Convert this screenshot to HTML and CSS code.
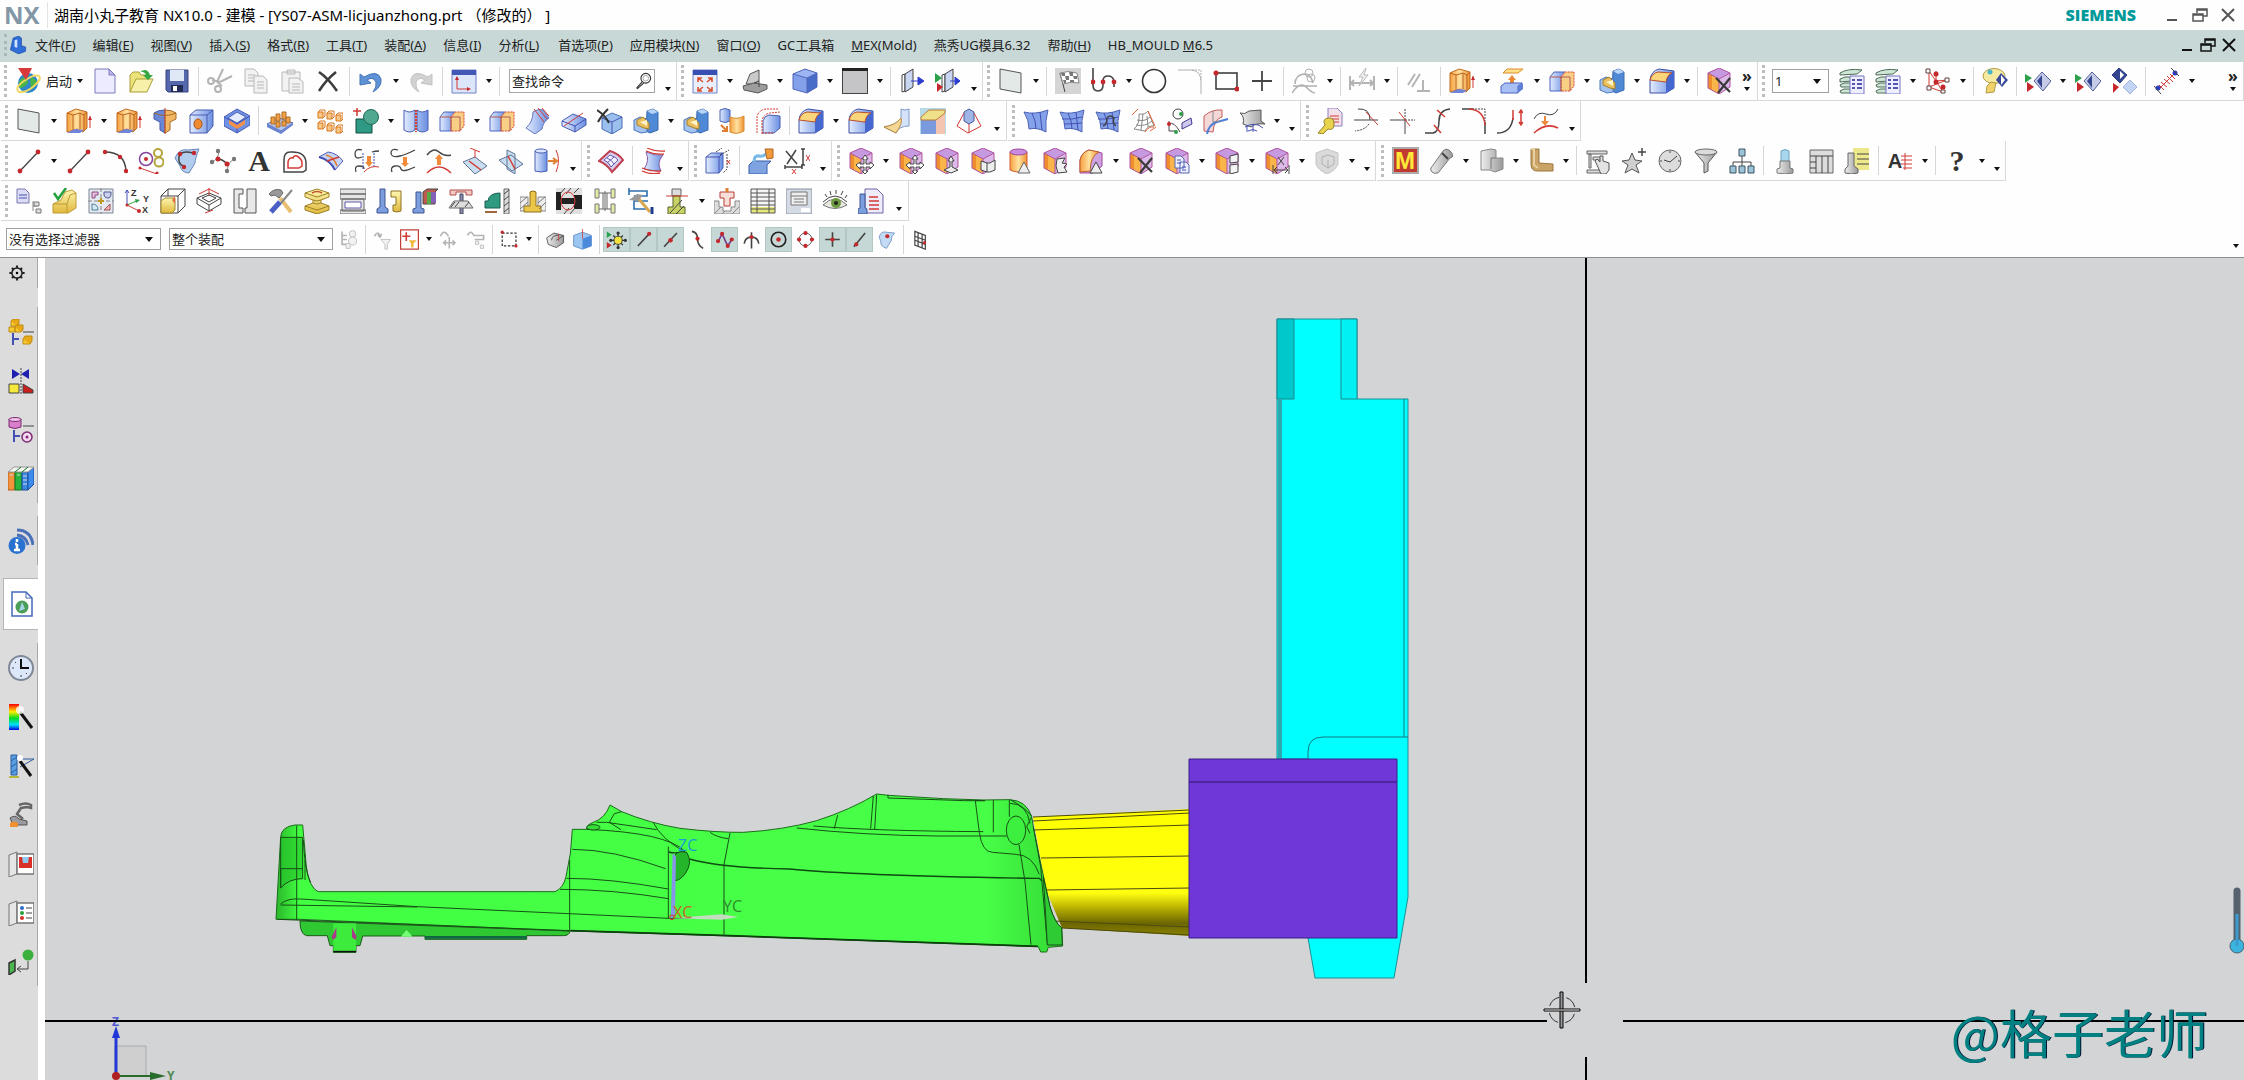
FILE: index.html
```html
<!DOCTYPE html>
<html lang="zh-CN">
<head>
<meta charset="utf-8">
<title>NX10.0 - 建模</title>
<link rel="stylesheet" href="styles.css">
</head>
<body>
<svg class="sprite" aria-hidden="true">
<defs>
<linearGradient id="gb"><stop offset="0" stop-color="#e3ecff"/><stop offset="1" stop-color="#6a8fe0"/></linearGradient>
<linearGradient id="go"><stop offset="0" stop-color="#f6a040"/><stop offset=".5" stop-color="#ffe2a0"/><stop offset="1" stop-color="#ee9030"/></linearGradient>
<linearGradient id="gg"><stop offset="0" stop-color="#eeeeee"/><stop offset="1" stop-color="#999999"/></linearGradient>
<linearGradient id="gy" x2="0" y2="1"><stop offset="0" stop-color="#fdf6b0"/><stop offset="1" stop-color="#e0b83c"/></linearGradient>
<linearGradient id="gr" x2="0" y2="1"><stop offset="0" stop-color="#f00"/><stop offset=".3" stop-color="#fe0"/><stop offset=".55" stop-color="#0d2"/><stop offset=".8" stop-color="#0df"/><stop offset="1" stop-color="#00d"/></linearGradient>
<linearGradient id="yel" x2="0" y2="1"><stop offset="0" stop-color="#ff0"/><stop offset=".66" stop-color="#ffff10"/><stop offset=".78" stop-color="#b8b000"/><stop offset=".9" stop-color="#6c6600"/><stop offset="1" stop-color="#8a8200"/></linearGradient>
<linearGradient id="grn"><stop offset="0" stop-color="#2bb52b"/><stop offset=".03" stop-color="#42ff42"/><stop offset=".9" stop-color="#48ff48"/><stop offset="1" stop-color="#34d834"/></linearGradient>
</defs>
<symbol id="start" viewBox="0 0 26 26"><circle cx="13" cy="15" r="10" fill="#2e86cc"/><path d="M5 12q4-5 7-1t-2 7-4 3q-4-4-1-9M16 9q6 2 6 7l-5 5q-3-5-1-12" fill="#48b44a"/><path d="M4 24Q-1 20 9 13T24 8q3 3-5 10T4 24" fill="none" stroke="#f0d860" stroke-width="2"/><path d="M3 0h14l-6 12z" fill="#d8383a"/></symbol>
<symbol id="new" viewBox="0 0 26 26"><path d="M3 1h14l6 6v18H3z" fill="#ecebff" stroke="#7d7bbd"/><path d="M17 1v6h6z" fill="#b9b6ee" stroke="#7d7bbd"/></symbol>
<symbol id="open" viewBox="0 0 26 26"><path d="M2 24V7l3-3h6l2 3h8v5" fill="#ece27a" stroke="#a99e39"/><path d="M2 24l6-13h17l-6 13z" fill="#f6f0a8" stroke="#a99e39"/><path d="M12 4q7-5 10 3h3l-5 5-5-5h3q-2-4-6-3" fill="#35a843"/></symbol>
<symbol id="save" viewBox="0 0 26 26"><path d="M2 2h22v22H4l-2-2z" fill="#5568ac" stroke="#39457e"/><path d="M6 2h14v11H6z" fill="#dfe9f6"/><path d="M7 17h12v7H7z" fill="#222b55"/><path d="M9 18h4v5H9z" fill="#fff"/></symbol>
<symbol id="cut" viewBox="0 0 26 26"><path d="M10 14L16 1M13 14L25 8M10 14l5 4M5 12l8 2" class="s3"/><circle cx="4" cy="13" r="3" class="s3"/><circle cx="11" cy="21" r="3" class="s3"/></symbol>
<symbol id="copy" viewBox="0 0 26 26"><path d="M2 1h9l4 4v13H2z M5 7h7M5 10h7M5 13h7" class="lg"/><path d="M11 8h9l4 4v13H11z M14 14h7M14 17h7M14 20h7" class="lg"/></symbol>
<symbol id="paste" viewBox="0 0 26 26"><path d="M3 4h18v19H3z M8 2h8v4H8z" class="lg"/><path d="M10 10h9l5 4v11H10z M13 16h8M13 19h8M13 22h8" class="lg"/></symbol>
<symbol id="del" viewBox="0 0 26 26"><path d="M4 4q9 6 18 19M21 4Q11 12 4 23" fill="none" stroke="#3d3d3d" stroke-width="2.6"/></symbol>
<symbol id="undo" viewBox="0 0 26 26"><path d="M2 6v11l11-2-4-3q6-4 9 2 1 5-3 10 9-5 8-13Q20 1 6 9z" fill="#5f93d6" stroke="#4474b8"/></symbol>
<symbol id="redo" viewBox="0 0 26 26"><path d="M24 6v11l-11-2 4-3q-6-4-9 2-1 5 3 10-9-5-8-13Q6 1 20 9z" fill="#d2d2d2" stroke="#c2c2c2"/></symbol>
<symbol id="win" viewBox="0 0 26 26"><path d="M1 2h24v23H1z" fill="#dce6fb" stroke="#6f82c5"/><path d="M1 2h24v5H1z" fill="#4159b5"/><path d="M6 9v12h12" class="r"/><path d="M4 12l2-4 2 4zM16 19l4 2-4 2z" class="rf"/></symbol>
<symbol id="fit" viewBox="0 0 26 26"><path d="M1 2h24v23H1z" fill="#e8eefc" stroke="#6f82c5"/><path d="M1 2h24v5H1z" fill="#3750b2"/><path d="M6 14v-4h4M20 14v-4h-4M6 19v4h4M20 19v4h-4M6 10l5 4M20 10l-5 4M6 23l5-4M20 23l-5-4" fill="none" stroke="#d9502e" stroke-width="1.6"/></symbol>
<symbol id="orient" viewBox="0 0 26 26"><path d="M4 16L8 6l9-4v11l-5 3z" fill="#c9c9c9" stroke="#555"/><path d="M1 18l11-3 13 2v4l-9 4-14-3z" fill="#9d9d9d" stroke="#555"/><path d="M12 15l5-2v6" class="k"/></symbol>
<symbol id="cube" viewBox="0 0 26 26"><path d="M1 6l12-5 12 4-10 5z" fill="#9db6f3"/><path d="M1 6l14 4v15L1 21z" fill="#83a0ea"/><path d="M15 10l10-5v14l-10 6z" fill="#4a6cc9"/><path d="M1 6l12-5 12 4v14l-10 6-14-4zM1 6l14 4 10-5M15 10v15" fill="none" stroke="#5065b8"/></symbol>
<symbol id="bgsq" viewBox="0 0 26 26"><path d="M0 0h26v26H0z" fill="#c5c5c7" stroke="#444" stroke-width="2"/><path d="M0 0h26v3H0z" fill="#222"/></symbol>
<symbol id="clip" viewBox="0 0 26 26"><path d="M3 7l3-1v17l-3 1z" fill="#fff" stroke="#444"/><path d="M6 6l8-5v18l-8 5z" fill="#c9d6f2" stroke="#444"/><path d="M12 13h7V9l6 4-6 4v-4" fill="#2c3cd0" stroke="#2c3cd0"/></symbol>
<symbol id="clip2" viewBox="0 0 26 26"><path d="M7 7l3-1v17l-3 1z" fill="#fff" stroke="#444"/><path d="M10 6l8-5v18l-8 5z" fill="#c9d6f2" stroke="#444"/><path d="M15 13h5V9l5 4-5 4v-4" fill="#2c3cd0" stroke="#2c3cd0"/><path d="M0 5l7 5-7 5z" class="gf"/><path d="M2 15l6 4-6 5z" class="rf"/></symbol>
<symbol id="sheet" viewBox="0 0 26 26"><path d="M2 1l21 4v20L2 21z" fill="#e3e9e6" stroke="#555"/></symbol>
<symbol id="flag" viewBox="0 0 26 26"><path d="M0 0h26v26H0z" fill="#d5d5d5"/><path d="M5 5l5 19" class="k"/><path d="M5 5q8-3 17 0l2 10q-8-2-16 1z" fill="#fff" stroke="#888"/><path d="M6 5h4v3H7zM14 4h4v4h-3zM10 8h4v4h-3zM18 8h4v3h-3zM8 12h3v3H9zM15 12h4v2h-4z" fill="#777"/></symbol>
<symbol id="prof" viewBox="0 0 26 26"><path d="M2 0v17q0 6 5 6t5-6v-4q0-5 5-5t6 5v6" class="k" stroke-width="1.600"/><circle cx="2" cy="14" r="2.4" class="rf"/><circle cx="12" cy="14" r="2.4" class="rf"/><circle cx="23" cy="14" r="2.4" class="rf"/></symbol>
<symbol id="circ" viewBox="0 0 26 26"><circle cx="13" cy="13" r="11.5" fill="none" stroke="#333" stroke-width="1.6"/></symbol>
<symbol id="arc" viewBox="0 0 26 26"><path d="M1 2h14q9 1 9 12v12" class="lg0"/><path d="M15 2h9v10" class="d lg0"/></symbol>
<symbol id="rect" viewBox="0 0 26 26"><path d="M3 5h21v16H3z" fill="none" stroke="#333" stroke-width="1.5"/><circle cx="3" cy="5" r="2.5" class="rf"/><circle cx="24" cy="21" r="2.5" class="rf"/></symbol>
<symbol id="plus" viewBox="0 0 26 26"><path d="M13 3v20M3 13h20" fill="none" stroke="#444" stroke-width="1.8"/></symbol>
<symbol id="gcurve" viewBox="0 0 26 26"><path d="M1 18h24M3 16q0-9 9-10 7 0 9 9M0 25q8-12 14-6t9 6" class="lg0" stroke-width="1.500"/><circle cx="17" cy="5" r="4" class="lg0"/><circle cx="19" cy="10" r="4" class="lg0"/></symbol>
<symbol id="gdim" viewBox="0 0 26 26"><path d="M1 8v14M25 8v14M2 15h22M5 12l-3 3 3 3M21 12l3 3-3 3" class="s3"/><path d="M17 0l-7 9h4l-4 9 9-11h-4z" class="lg"/></symbol>
<symbol id="gperp" viewBox="0 0 26 26"><path d="M2 17L9 6M6 19l8-13M17 12v11M11 23h13" class="s3"/></symbol>
<symbol id="extr" viewBox="0 0 26 26"><path d="M1 5l9-4 11 3v16l-4 4-6-3-10 3z" fill="url(#go)" stroke="#c06a20"/><path d="M1 5l6 2 7-2 4 2 3-3M7 7v15M14 5v16M18 7v16" fill="none" stroke="#b9651f"/><path d="M1 25l8-4 9 1-4 3z" fill="#6f83d8"/><path d="M24 20V8" class="r"/><path d="M22 12l2-4 2 4z" class="rf"/></symbol>
<symbol id="lift" viewBox="0 0 26 26"><path d="M4 5l4-4h16l-5 4z" fill="#ffe08a" stroke="#dd8a2a"/><path d="M13 7l4 5h-2v5h-4v-5H9z" fill="#ea8a35"/><path d="M2 18l4-3h17l-4 3v7H2z" fill="#a9c0f5" stroke="#4b63c0"/><path d="M19 18l5-3v6l-5 4z" fill="#5f7fd8"/></symbol>
<symbol id="bool" viewBox="0 0 26 26"><path d="M1 9l4-5h11v15l-3 4H1z" fill="url(#gb)" stroke="#4b63c0"/><path d="M12 9l4-5h9v14l-4 5h-9z" fill="#f9cf85" stroke="#d8402c" stroke-dasharray="2 1"/><path d="M1 9h11v14M12 9h9v14" fill="none" stroke="#b05858"/></symbol>
<symbol id="shellb" viewBox="0 0 26 26"><path d="M14 3l6-2 5 3v18l-8 3-4-2z" fill="#4f88d4" stroke="#3d68b0"/><path d="M14 3l6-2 5 3-6 2z" fill="#b9d4f4"/><path d="M1 12l6-3 7 2v13l-6 1-7-3z" fill="#a4c3ee" stroke="#4b78bc"/><path d="M4 12l6-3 6 6v6l-5-1-7-3z" fill="#eac05f" stroke="#a6802a"/><path d="M7 14l7 4v-6z" fill="#fff3c8"/></symbol>
<symbol id="blend" viewBox="0 0 26 26"><path d="M1 12Q2 3 10 1l15 2v17l-8 5H1z" fill="url(#gb)" stroke="#3d4ea5"/><path d="M17 14q0-8 8-11v17l-8 5z" fill="#4468cf"/><path d="M1 12Q3 5 9 4l14 1q-5 2-6 9z" fill="#f9d57c" stroke="#bb4f2e"/></symbol>
<symbol id="pcube" viewBox="0 0 26 26"><path d="M13 0l11 5-11 6L2 5z" fill="#c59ae0"/><path d="M2 5l11 6v15L2 20z" fill="#f9b54a"/><path d="M2 5l4 2v15l-4-2z" fill="#ee8e2c"/><path d="M13 11l11-6v14l-11 7z" fill="#dcb9e8"/><path d="M13 0l11 5v14l-11 7-11-6V5zM2 5l11 6 11-6M13 11v15" fill="none" stroke="#b0529e"/></symbol>
<symbol id="pdel" viewBox="0 0 26 26"><use href="#pcube"/><path d="M10 10l14 14M24 10L12 25" fill="none" stroke="#3a3a3a" stroke-width="2.200"/></symbol>
<symbol id="pmove" viewBox="0 0 26 26"><use href="#pcube"/><path d="M17 7l3 4h-2v5h4v-2l4 3-4 4v-2h-4v4h2l-3 3-3-3h2v-4h-4v2l-4-4 4-3v2h4v-5h-2z" fill="#fff" stroke="#444"/></symbol>
<symbol id="ppull" viewBox="0 0 26 26"><use href="#pcube"/><path d="M17 8l3 5h-2v6l6 3-7 3-7-3 6-3v-6h-2z" fill="#eee" stroke="#444"/></symbol>
<symbol id="pcopyf" viewBox="0 0 26 26"><use href="#pcube"/><path d="M11 13l6 2v9l-6-2zM17 15h3l5-3v10l-5 2h-3" fill="#eee" stroke="#444"/></symbol>
<symbol id="pcyl" viewBox="0 0 26 26"><path d="M4 4v18q8 4 17 0V4z" fill="url(#go)" stroke="#d05c30"/><ellipse cx="12.500" cy="4" rx="8.500" ry="3" fill="#c78be0" stroke="#a04a9c"/><path d="M18 14l6 11H12z" fill="#eee" stroke="#666"/></symbol>
<symbol id="pgrp" viewBox="0 0 26 26"><use href="#pcube"/><path d="M15 11l8-1-3 5 5 1-3 3 3 5-9 1-2-7z" fill="#f0f0f0" stroke="#444"/></symbol>
<symbol id="pblend" viewBox="0 0 26 26"><path d="M2 12q2-8 9-10l13 3v13l-9 7H2z" fill="#cda2e2" stroke="#a0469a"/><path d="M2 12q2-8 9-10l10 2q-6 3-8 11l-1 8-10 1z" fill="url(#go)" stroke="#c0602a"/><path d="M18 14l6 11H12z" fill="#eee" stroke="#444"/></symbol>
<symbol id="pcopy" viewBox="0 0 26 26"><use href="#pcube"/><path d="M11 8h6l3 3v9h-9zM16 14h6l3 3v8h-9z" fill="#eef" stroke="#5468b0"/><path d="M13 12h4M13 15h4M18 19h4M18 22h4" class="b"/></symbol>
<symbol id="pstack" viewBox="0 0 26 26"><use href="#pcube"/><path d="M16 8l8-2v8l-8 1zM16 17l8-1v8l-8 2z" fill="#f4f4f4" stroke="#444"/></symbol>
<symbol id="pdim" viewBox="0 0 26 26"><use href="#pcube"/><path d="M9 17v9M25 17v9M10 22h14M13 19l-3 3 3 3M21 19l3 3-3 3M14 9l6 8M20 9l-6 8" class="k"/></symbol>
<symbol id="shield" viewBox="0 0 26 26"><path d="M2 5l11-4 11 4v11q-2 6-11 10Q4 22 2 16z" fill="#dadada" stroke="#c4c4c4"/><path d="M8 9l6-2 6 2v7l-6 4-6-4zM14 12v8" class="lg0"/></symbol>
<symbol id="layer" viewBox="0 0 26 26"><path d="M1 5q8-5 22-3l-5 4-17 1zM1 11l5-2h10l-3 4-12 1zM1 17l4-2h8v4H2zM1 23l4-2h8v4H2z" fill="#cfe5d6" stroke="#4b6b56"/><path d="M11 8h14v18H11z" fill="#eeeeff" stroke="#7374c0"/><path d="M13 12h3M13 16h3M13 20h3M18 12h5M18 16h5M18 20h5" stroke="#5356b0" stroke-width="2"/></symbol>
<symbol id="tree" viewBox="0 0 26 26"><path d="M4 3v16l14 5M4 3l7 10 12-1M4 19L22 12M11 13l7 11M11 3v10" class="r"/><path d="M1 1h4v4H1zM2 18h4v4H2zM20 10h4v4h-4zM16 22h4v3h-4z" fill="#fff" stroke="#5c4038"/><circle cx="11" cy="6" r="2.500" class="rf"/><circle cx="11" cy="14" r="2.500" class="rf"/><circle cx="18" cy="19" r="2.500" class="rf"/></symbol>
<symbol id="pick" viewBox="0 0 26 26"><ellipse cx="12" cy="8" rx="11" ry="7.500" fill="#f6e9a0" stroke="#b39b46"/><path d="M9 14l-4 4-1 7 8-1 2-9z" fill="#efd36a" stroke="#b39b46"/><circle cx="8" cy="4" r="2.500" fill="#49b6c8"/><path d="M14 12l5-7 7 7-6 7z" fill="#39499a"/><path d="M19 7v10l4-5z" fill="#fff"/></symbol>
<symbol id="dmd" viewBox="0 0 26 26"><path d="M9 13L17 4l9 9-8 10z" fill="#c5cbe6" stroke="#53619e"/><path d="M12 13l5-6v13z" fill="#33458f"/><path d="M0 6l7 4-7 5z" class="gf"/><path d="M2 14l7 5-7 5z" class="rf"/></symbol>
<symbol id="dmd2" viewBox="0 0 26 26"><path d="M1 7l7-7 8 7-7 8z" fill="#33458f" stroke="#2b3a80"/><path d="M9 3v8l4-4z" fill="#fff"/><path d="M12 19l7-7 7 7-7 7z" fill="#c4d4f4" stroke="#a0b4e2"/><path d="M2 15l6 4-6 6z" class="rf"/></symbol>
<symbol id="ruler" viewBox="0 0 26 26"><path d="M4 22L22 4M7 14l6 5M10 11l6 5M13 8l6 6M5 17l5 5M16 6l5 5" class="r"/><circle cx="4" cy="20" r="2.500" fill="#2b3dc0"/><circle cx="21" cy="5" r="2.500" fill="#2b3dc0"/><path d="M0 18l7 8M17 0l8 8" class="k"/></symbol>
<symbol id="rev" viewBox="0 0 26 26"><path d="M2 5q4-3 11-3v23l-5-3v-8l-6-3z" fill="#6a87d8" stroke="#445aa8"/><path d="M13 2q7 0 11 3v6l-6 3v8l-5 3z" fill="#f3b763" stroke="#a66a24"/><path d="M2 5q11 5 22 0" fill="none" stroke="#a66a24"/><path d="M13 0v26" class="r d"/></symbol>
<symbol id="hole" viewBox="0 0 26 26"><path d="M2 7l6-5h17v16l-6 7H2z" fill="url(#gb)" stroke="#4a5db2"/><path d="M2 7h17v18M19 7l6-5" fill="none" stroke="#4a5db2"/><ellipse cx="10" cy="16" rx="4" ry="5" fill="#f08a30" stroke="#a55520"/></symbol>
<symbol id="emb" viewBox="0 0 26 26"><path d="M0 9l13-8 13 7v9l-13 8-13-7z" fill="#6f92e4" stroke="#4a5db2"/><path d="M0 9l13 7 13-8M13 16v9" class="b"/><path d="M4 10l9-6 9 5-9 6z" fill="#e4ecff" stroke="#4a5db2"/><path d="M5 12l8 5 8-5v4l-8 5-8-5z" fill="#f3904a"/></symbol>
<symbol id="patt" viewBox="0 0 26 26"><path d="M0 16l12-6 14 5-12 8z" fill="#b5c6f2" stroke="#5a6cb8"/><path d="M0 16v3l14 7 12-9v-2l-12 8z" fill="#6a83d0"/><path d="M4 9h4v7H4zM9 6h4v7H9zM15 4h4v7h-4zM9 14h4v5H9zM15 13h4v5h-4zM19 9h4v6h-4z" fill="#efa047" stroke="#b06d20"/></symbol>
<symbol id="patg" viewBox="0 0 26 26"><path d="M1 4h5v6H1zM10 5h5v6h-5zM19 7h5v6h-5zM1 15h5v6H1zM10 17h5v6h-5zM19 19h5v6h-5z" fill="#f8c785" stroke="#d8741a"/><path d="M1 4l2-2h5v6l-2 2M10 5l2-2h5v6l-2 2M19 7l2-2h5v6l-2 2M1 15l2-2h5v6l-2 2M10 17l2-2h5v6l-2 2M19 19l2-2h5v6l-2 2" fill="none" stroke="#d8741a"/></symbol>
<symbol id="unite" viewBox="0 0 26 26"><path d="M3 11h16v14H3z" fill="#2e9a86" stroke="#134c40"/><circle cx="18" cy="9" r="7.500" fill="#4fa88f" stroke="#1f6a58"/><path d="M4 0v8M0 3h8" class="r" stroke-width="1.500"/></symbol>
<symbol id="sew" viewBox="0 0 26 26"><path d="M1 2q5 4 11 0v20q-5 4-11 0zM14 2q5 4 11 0v20q-5 4-11 0z" fill="url(#gb)" stroke="#4a5db2"/><path d="M13 2v22" class="r d w"/></symbol>
<symbol id="draftf" viewBox="0 0 26 26"><path d="M8 4q6-4 10-2l6 8q-6 4-7 11L10 26l-9-6q7-6 7-16z" fill="url(#gb)" stroke="#6676c0"/><path d="M9 1l10 13M13 0l9 11M17 0l7 8" class="r"/></symbol>
<symbol id="split" viewBox="0 0 26 26"><path d="M1 13l11-7 13 5v6l-11 7-13-6z" fill="url(#gb)" stroke="#4a5db2"/><path d="M1 13l13 5 11-7M14 18v6" class="b"/><path d="M3 18L22 5" class="r"/></symbol>
<symbol id="delb" viewBox="0 0 26 26"><path d="M5 10l10-5 10 4v11l-10 6-10-5z" fill="#9cc0ee" stroke="#4a6db2"/><path d="M5 10l10 4 10-5M15 14v12" class="b"/><path d="M0 2q8 5 12 13M11 1Q4 8 1 14" fill="none" stroke="#333" stroke-width="2"/></symbol>
<symbol id="repl" viewBox="0 0 26 26"><path d="M1 2q5-3 10 0v11q-5 3-10 0z" fill="url(#gb)" stroke="#4a63b2"/><path d="M11 9q7 3 14-1v15q-7 4-14 1z" fill="url(#go)" stroke="#d88a30"/><path d="M2 17l5 5M8 18v5H3" fill="none" stroke="#e07c30" stroke-width="2"/></symbol>
<symbol id="dash" viewBox="0 0 26 26"><path d="M8 13q1-5 6-6l11 1v12l-6 5H8z" fill="url(#gb)" stroke="#4a5db2"/><path d="M2 25V8q3-7 10-7h12M7 26V12q2-6 8-7l10-1M7 25h12" class="r d"/></symbol>
<symbol id="flange" viewBox="0 0 26 26"><path d="M17 1q4 2 8 0v17q-10 0-13 7l-12-6q12-2 17-9z" fill="#d4e2fa" stroke="#7f9ac8"/><path d="M17 10q2 5-5 15L0 19q12-2 17-9" fill="#f5d795" stroke="#b98c3c"/></symbol>
<symbol id="chamf" viewBox="0 0 26 26"><path d="M0 0h26v26H0z" fill="#b7dbe6"/><path d="M1 12h15v14H1z" fill="#7b9ade"/><path d="M16 12l9-8v22h-9z" fill="#f4c4b0"/><path d="M1 9l8-7h16v3l-9 7H1z" fill="#efe08a" stroke="#c07d3a"/></symbol>
<symbol id="draft" viewBox="0 0 26 26"><path d="M8 4l5-3 5 3v9l-5 3-5-3z" fill="#9fb5e6" stroke="#44599c"/><path d="M8 5L1 18l11 7 13-7-7-13M13 16v9" class="r"/></symbol>
<symbol id="surf" viewBox="0 0 26 26"><path d="M1 4q11 3 24-2-3 10-2 22-9-5-17-3Q6 12 1 4z" fill="#84a2ea" stroke="#4d62b4"/><path d="M9 5q4 8 4 16M17 4q1 9 2 18" class="b"/></symbol>
<symbol id="surf2" viewBox="0 0 26 26"><use href="#surf"/><path d="M3 11q10 1 20-2M5 16q9 0 18-1" class="b"/></symbol>
<symbol id="surf3" viewBox="0 0 26 26"><use href="#surf2"/><path d="M8 18q4-1 4-8 3-4 7 0-2 5 2 8" class="k" stroke-width="1.500"/></symbol>
<symbol id="mesh" viewBox="0 0 26 26"><path d="M8 6q6 1 9-3l6 15q-6-1-9 5L3 21q6-5 5-15zM6 12q8 2 13-3M5 17q9 2 16-4M12 6l-2 16M16 8l1 11" fill="#fff" stroke="#888"/><path d="M1 7l6-6M19 23l6-4M14 24q4-6 9-5M17 3l7 15" fill="none" stroke="#e0683c"/></symbol>
<symbol id="circs" viewBox="0 0 26 26"><circle cx="11" cy="6" r="5" class="k"/><path d="M2 13v10M2 16q5-3 11 8M2 23h8" class="k"/><path d="M15 15l9-5 1 6-10 5z" fill="#cdc8f0" stroke="#41388c"/><circle cx="2" cy="16" r="2" class="rf"/><circle cx="9" cy="24" r="2" class="gf"/><circle cx="14" cy="6" r="2" class="gf"/></symbol>
<symbol id="sweep" viewBox="0 0 26 26"><path d="M1 8q8-7 18-6v7q-8 2-9 15l-9-1z" fill="#f4d8d8" stroke="#c85b5b"/><path d="M4 26q2-10 10-12l11-3" fill="none" stroke="#4a7fd8" stroke-width="2"/><path d="M10 3v11l8-1" fill="none" stroke="#888"/></symbol>
<symbol id="gsurf" viewBox="0 0 26 26"><path d="M1 5q5 2 9-2l12-1v11l4 3q-10-1-14 3L4 16Q6 9 1 5z" fill="url(#gg)" stroke="#555"/><path d="M6 19q10-6 18 1M9 23q5-3 9 0M8 17v7M14 16v8" class="b"/></symbol>
<symbol id="keydoc" viewBox="0 0 26 26"><path d="M11 0h9l5 5v13H11z" fill="#f3dfe8" stroke="#8b80c0"/><path d="M13 8h9M13 11h9M13 14h9" class="r"/><path d="M1 25l7-8q-3-6 3-7t6 6-6 5l-5 5z" fill="#e8d44c" stroke="#97832a"/></symbol>
<symbol id="c1" viewBox="0 0 26 26"><path d="M5 1q12-1 12 11M1 12h24" class="k"/><path d="M16 16q-4 6-14 7" class="k d"/><path d="M13 4l12 13" class="r"/></symbol>
<symbol id="c2" viewBox="0 0 26 26"><path d="M1 12h15v14" class="k"/><path d="M16 12V0M16 12h10" class="k d"/><path d="M10 4l11 14" class="r"/></symbol>
<symbol id="c3" viewBox="0 0 26 26"><path d="M0 25h8q6-1 6-12T25 1" class="k" stroke-width="1.500"/><path d="M9 17l7 8M12 2l8 7" class="r" stroke-width="1.500"/></symbol>
<symbol id="c4" viewBox="0 0 26 26"><path d="M1 1h12M24 14v12" class="k" stroke-width="1.500"/><path d="M8 1q15 1 16 16" class="r" stroke-width="1.500"/><path d="M14 1h10v12" class="k d"/></symbol>
<symbol id="c5" viewBox="0 0 26 26"><path d="M0 25q14 0 16-15" class="k" stroke-width="1.500"/><path d="M16 12V2M24 3v13M22 5l2-3 2 3M22 14l2 3 2-3" class="r" stroke-width="1.500"/></symbol>
<symbol id="c6" viewBox="0 0 26 26"><path d="M1 11q4-8 12-5t12-5" class="k"/><path d="M11 8v5H8l4 5 4-5h-3V8z" fill="#ef8a3a"/><path d="M1 25q12-11 24-5" class="r" stroke-width="1.500"/></symbol>
<symbol id="line" viewBox="0 0 26 26"><path d="M4 23L22 4" class="k" stroke-width="1.300"/><circle cx="4" cy="23" r="2.400" class="rf"/><circle cx="22" cy="4" r="2.400" class="rf"/></symbol>
<symbol id="arcp" viewBox="0 0 26 26"><path d="M3 4q20 0 21 19" class="k" stroke-width="1.500"/><circle cx="3" cy="4" r="2.200" class="rf"/><circle cx="18" cy="9" r="2.200" class="rf"/><circle cx="24" cy="23" r="2.200" class="rf"/></symbol>
<symbol id="lnarc" viewBox="0 0 26 26"><circle cx="8" cy="11" r="6.500" fill="none" stroke="#8444a0" stroke-width="1.500"/><circle cx="8" cy="11" r="2" class="rf"/><circle cx="20" cy="5" r="4" fill="none" stroke="#b5a53a" stroke-width="2"/><circle cx="21" cy="14" r="4.500" fill="none" stroke="#b5a53a" stroke-width="2"/><path d="M2 20l17 6" class="r"/><circle cx="2" cy="20" r="1.500" class="rf"/><circle cx="19" cy="25" r="1.500" class="rf"/></symbol>
<symbol id="sheetc" viewBox="0 0 26 26"><path d="M1 10Q5 0 14 2l11-1q-4 10-4 14l-6 10Q8 25 6 18z" fill="#b3cdee" stroke="#6a88bd"/><path d="M19 5Q6 2 5 9t4 9" class="k" stroke-width="1.500"/><circle cx="6" cy="6" r="2.200" class="rf"/><circle cx="20" cy="5" r="2.200" class="rf"/><circle cx="10" cy="19" r="2.200" class="rf"/></symbol>
<symbol id="spline" viewBox="0 0 26 26"><path d="M2 14q6-2 7-11M17 23q1-9 7-12" fill="none" stroke="#888"/><path d="M7 11q6 0 10 5" class="k" stroke-width="1.500"/><circle cx="2" cy="14" r="2.200" fill="#777"/><circle cx="8" cy="3" r="2.200" fill="#777"/><circle cx="8" cy="11" r="2.500" class="rf"/><circle cx="17" cy="16" r="2.500" class="rf"/><circle cx="17" cy="23" r="2.200" fill="#777"/><circle cx="24" cy="11" r="2.200" fill="#777"/></symbol>
<symbol id="offc" viewBox="0 0 26 26"><path d="M2 24V12q0-8 6-8 15-1 16 10v8l-3 2z" class="k" stroke-width="1.500"/><path d="M6 20v-6q1-5 5-4 1-3 4-2 5 3 5 7v3l-3 2z" class="r" stroke-width="1.500"/></symbol>
<symbol id="ppatch" viewBox="0 0 26 26"><path d="M1 9l9-5q9 1 15 9l-8 9Q12 12 1 9z" fill="#c4d2f4" stroke="#5560b8"/><path d="M1 9q11 3 16 13" class="b w"/><path d="M8 7q8 2 11 11" fill="none" stroke="#e08030" stroke-width="1.500"/><path d="M9 13l12-4" class="r" stroke-width="1.500"/></symbol>
<symbol id="proj" viewBox="0 0 26 26"><path d="M8 2q-7-2-7 4t7 3M18 4q3-1 7-1M2 24q-2-6 3-6t5 3" class="k" stroke-width="1.300"/><path d="M9 5v16M20 5v14" class="d b"/><path d="M13 8v6h-2l4 5 4-5h-2V8z" fill="#ef8a3a"/><path d="M10 24q6-7 15-5" class="r"/></symbol>
<symbol id="proj2" viewBox="0 0 26 26"><path d="M8 2q-7-2-7 3t9 3q5-1 15-6M2 24q-2-5 3-6t6 3 14-2" class="k" stroke-width="1.300"/><path d="M13 9v6h-2l4 4 4-4h-2V9z" fill="#ef8a3a"/></symbol>
<symbol id="comb" viewBox="0 0 26 26"><path d="M1 7q6-8 12-3t12 3" class="k" stroke-width="1.500"/><path d="M13 6l-4 5h2v6h4v-6h2z" fill="#ef8a3a"/><path d="M1 25q12-12 24 0" class="r" stroke-width="1.500"/></symbol>
<symbol id="isect" viewBox="0 0 26 26"><path d="M1 14l12-5 12 9-12 8z" fill="#c9ddf0" stroke="#5f7494"/><path d="M8 0l10 4M13 2v8" class="r"/><path d="M7 13l12 9" class="r" stroke-width="1.500"/></symbol>
<symbol id="isect2" viewBox="0 0 26 26"><path d="M1 12l12-5 12 9-11 7zM9 2l8 4v20l-8-5z" fill="#c9ddf0" stroke="#5f7494"/><path d="M10 8l7 13" class="r" stroke-width="1.500"/></symbol>
<symbol id="wrap" viewBox="0 0 26 26"><path d="M1 3v20q6 2 12 0V3z" fill="url(#gb)" stroke="#4a5db2"/><ellipse cx="7" cy="3" rx="6" ry="2" fill="#dce6ff" stroke="#4a5db2"/><path d="M14 13h8M19 10l4 3-4 3" fill="none" stroke="#e08030" stroke-width="2"/><path d="M22 2q5 10 0 22" class="r"/></symbol>
<symbol id="ndia" viewBox="0 0 26 26"><path d="M1 13l11-10q9 3 13 9L14 24Q9 16 1 13z" fill="#d8d0ee" stroke="#c04050" stroke-width="2"/><path d="M6 12l6-5q6 2 8 5l-7 7q-2-5-7-7zM9 10q5 2 7 6M9 15l7-6" fill="#f6f4ff" stroke="#6658b0"/></symbol>
<symbol id="nx" viewBox="0 0 26 26"><path d="M5 4q9 4 17 3-7 8-2 16-8 0-17-2 6-8 2-17z" fill="url(#gb)" stroke="#8a5ca0"/><path d="M6 0q9 4 18 3M5 3q9 4 18 3M1 20q9 4 19 3M1 23q9 4 18 2" class="r" stroke-width="1.300"/></symbol>
<symbol id="mvf" viewBox="0 0 26 26"><path d="M1 9l5-4h12v15l-4 5H1z" fill="url(#gb)" stroke="#4a63b8"/><path d="M14 9v16M1 9h13l4-4" class="b"/><path d="M11 4l6-4M15 7l9-5M22 6v15l-4 4" class="k d"/><path d="M22 12l3 4M25 12l-3 4" class="r"/></symbol>
<symbol id="pour" viewBox="0 0 26 26"><path d="M1 17l4-4h18l-4 4v9H1z" fill="#7fa3e0" stroke="#3d5fae"/><path d="M6 14q0-7 5-6t9-4" fill="none" stroke="#78b8e8" stroke-width="3"/><path d="M17 1h8v9l-6 1z" fill="#f09a3c" stroke="#b06420"/></symbol>
<symbol id="xdim" viewBox="0 0 26 26"><path d="M2 3l11 13M12 2L3 16M19 1v16M17 1h4M17 17h4M1 19h17M1 17v4M18 17v4" class="k" stroke-width="1.500"/><path d="M22 7l4 6M26 7l-4 6M8 21l4 5M12 21l-4 5" class="r"/></symbol>
<symbol id="bolt" viewBox="0 0 26 26"><path d="M15 3q4-4 8 1t-1 6L10 25q-4 1-6-1t-1-4z" fill="url(#gg)" stroke="#777"/><path d="M14 5l6 6" stroke="#444" stroke-width="2"/></symbol>
<symbol id="gblk" viewBox="0 0 26 26"><path d="M3 3l10-2 5 1v8h7v11l-8 3-5-2H3z" fill="url(#gg)" stroke="#888"/><path d="M13 21V10h5" fill="none" stroke="#777"/></symbol>
<symbol id="ell" viewBox="0 0 26 26"><path d="M3 1h8v14l14 1v7H9q-6 0-6-7z" fill="#c9a466" stroke="#9b7740"/><path d="M3 1h3v16l4 3" fill="none" stroke="#e8cfa0" stroke-width="2"/></symbol>
<symbol id="hand" viewBox="0 0 26 26"><path d="M2 3h20v3H2zM4 6h2v14H4zM2 22h16v3H2zM8 9h9v3H8z" class="gk"/><path d="M12 17l-2-4 2-2 3 3V8h3v5l6 2v7l-3 4h-5z" fill="#e2e2e2" stroke="#555"/></symbol>
<symbol id="star" viewBox="0 0 26 26"><path d="M11 5l3 7 7 1-6 4 3 8-7-4-7 4 3-8-6-4 7-1z" fill="#cfcfcf" stroke="#555"/><path d="M21 0v8M17 4h8" class="k" stroke-width="1.500"/></symbol>
<symbol id="clk" viewBox="0 0 26 26"><circle cx="13" cy="13" r="11" class="gk"/><path d="M7 12l6 2 7-6M13 3v2M13 21v2M3 13h2M21 13h2" class="k"/></symbol>
<symbol id="funnel" viewBox="0 0 26 26"><path d="M2 4l9 11v10l4-2v-8l9-11z" fill="url(#gg)" stroke="#555"/><ellipse cx="13" cy="4" rx="11" ry="3" class="gk"/></symbol>
<symbol id="org" viewBox="0 0 26 26"><path d="M13 8v6M4 18v-4h18v4M13 14v4" class="k"/><path d="M10 1h6v7h-6zM1 18h6v7H1zM10 18h6v7h-6zM19 18h6v7h-6z" fill="#9cc4d8" stroke="#3d5563"/></symbol>
<symbol id="bluebolt" viewBox="0 0 26 26"><path d="M9 3q4-3 8 0v12H9z" fill="#a8d6ec" stroke="#6aa0bc"/><path d="M8 13h10v7l3 1v4q-8 2-16 0v-4l3-1z" fill="url(#gg)" stroke="#777"/></symbol>
<symbol id="tbl" viewBox="0 0 26 26"><path d="M2 2h23v23H2z" class="gk"/><path d="M2 8h23M8 8v17M14 8v17M20 8v17M2 14h6M2 20h6" class="k"/></symbol>
<symbol id="bnote" viewBox="0 0 26 26"><path d="M9 0h16v22H9z" fill="#eee88c"/><path d="M13 6h12M13 11h12M13 16h12" class="k"/><path d="M4 5h6v13l4 3v4q-6 2-13 0v-4l3-3z" fill="url(#gg)" stroke="#666"/></symbol>
<symbol id="doctree" viewBox="0 0 26 26"><path d="M1 1h8l4 4v10H1z" fill="#dcdcf4" stroke="#7a78b0"/><path d="M3 7h8M3 10h8" class="b"/><path d="M17 13v10M17 18h4" fill="none" stroke="#888"/><path d="M18 14h5v4h-5zM20 21h5v4h-5z" fill="#ddd" stroke="#777"/></symbol>
<symbol id="chk" viewBox="0 0 26 26"><path d="M1 16l8-4 4-8 7-2 4 3v15l-8 5H1z" fill="url(#gy)" stroke="#c09a34"/><path d="M1 16h14l3-9 6-2M15 16v9" fill="none" stroke="#c09a34"/><path d="M2 5l4 6L14 0" fill="none" stroke="#24a03c" stroke-width="2.500"/></symbol>
<symbol id="quad" viewBox="0 0 26 26"><path d="M1 1h24v24H1z" fill="#e4e9ef" stroke="#7c8494"/><path d="M13 0v26M0 13h26" stroke="#888" stroke-dasharray="4 2"/><path d="M4 4h6v3H7v3H4z" fill="#e6c0dc" stroke="#8a4d80"/><path d="M16 4h7v3q-1 4-4 3-3-1-3-3z" fill="#c8d0f0" stroke="#505a90"/><path d="M4 16q6 0 6 6H4z" fill="#d0e8f0" stroke="#50809a"/><path d="M16 22l6-6v6z" fill="#f0b6b6" stroke="#a05050"/><path d="M10 13h6M13 10v6" stroke="#c09a20" stroke-width="2"/></symbol>
<symbol id="cav" viewBox="0 0 26 26"><path d="M1 8l7-7h17v17l-7 7H1zM1 8h17v17M18 8l7-7M8 1v7" class="k"/><path d="M1 13l4-3h10v12l-3 3H1z" fill="url(#gy)" stroke="#a68b2c"/><path d="M12 12l3-4v8z" fill="#e0703c"/></symbol>
<symbol id="wire" viewBox="0 0 26 26"><path d="M1 10l12-5 12 5-12 7zM1 10v6l12 7 12-7v-6M13 17v6" class="k"/><path d="M13 0v8M3 6l10-5 10 5M9 25l8-3" class="r"/><path d="M6 10l7-3 7 3-7 4z" class="k"/></symbol>
<symbol id="brack" viewBox="0 0 26 26"><path d="M2 1h9v5H7v14h4v5H2zM15 1h9v24H13v-5h2z" fill="#e8e8e8" stroke="#555"/></symbol>
<symbol id="tools" viewBox="0 0 26 26"><path d="M12 10l11 14" stroke="#e6c070" stroke-width="4"/><path d="M1 6q5-6 12-4l2 3-4 5-4-3-4 1z" fill="#999" stroke="#666"/><path d="M24 2l-11 13" stroke="#888" stroke-width="2"/><path d="M12 14L3 24" stroke="#4a5fc4" stroke-width="5"/></symbol>
<symbol id="mold" viewBox="0 0 26 26"><path d="M1 5l12-4 12 4v4l-8 3v3l8 3v4l-12 4-12-4v-4l8-3v-3L1 9z" fill="url(#gy)" stroke="#9e8228"/><path d="M1 5l12 4 12-4M1 18l12 4 12-4M9 15q4 2 8 0M9 12q4 2 8 0" fill="none" stroke="#9e8228"/><path d="M8 5q5-3 10 0" fill="none" stroke="#c8502c" stroke-width="1.500"/></symbol>
<symbol id="base" viewBox="0 0 26 26"><path d="M0 1h26v5H0zM0 6h26v5H0zM2 11h22v12H2zM0 22h26v4H0z" fill="#e4e4e4" stroke="#666"/><path d="M5 14h16v6H5z" fill="#fff" stroke="#6058b0"/></symbol>
<symbol id="pin" viewBox="0 0 26 26"><path d="M4 1h5v18l3 2v4H1v-4l3-2z" fill="#7d9ede" stroke="#3d5590"/><path d="M15 3h10v20q-5 2-8 0v-6h3V9h-5z" fill="url(#gy)" stroke="#8d7224"/></symbol>
<symbol id="pinc" viewBox="0 0 26 26"><path d="M4 4h5v16l3 1v4H1v-4l3-1z" fill="#7d9ede" stroke="#3d5590"/><path d="M11 4l4-3h11l-3 3v12H11z" fill="#c05a50" stroke="#444"/><path d="M15 4h4v12h-4z" fill="#58a848"/><path d="M19 4h5v11h-5z" fill="#8460b8"/></symbol>
<symbol id="eject" viewBox="0 0 26 26"><path d="M2 2h22v5h-6V4H8v3H2z" fill="#f3c9c4" stroke="#b0504c"/><path d="M12 6h3v20h-3z" fill="#8a8cb8" stroke="#445"/><path d="M1 20l5-7h14l5 7z" class="gk"/><path d="M3 19l4-5M7 19l4-5M17 19l4-5" class="k"/></symbol>
<symbol id="slide" viewBox="0 0 26 26"><path d="M1 20v-7h3q1-8 12-8v15z" fill="#2e9a80" stroke="#1c5c50"/><path d="M20 1h5v25h-5z" class="gk"/><path d="M20 6l5-4M20 12l5-4M20 18l5-4M20 24l5-4" class="k"/><path d="M1 24h12" stroke="#a0683a" stroke-width="2"/></symbol>
<symbol id="lifter" viewBox="0 0 26 26"><path d="M0 9h8v14H0zM18 9h8v14h-8z" fill="#eee" stroke="#888"/><path d="M10 4q3-2 6 0v14h5v6H4v-6h6z" fill="#ecc648" stroke="#8c7020"/><path d="M0 15l7-6M0 21l8-7M18 15l7-6M19 21l7-7" fill="none" stroke="#777"/></symbol>
<symbol id="runner" viewBox="0 0 26 26"><path d="M0 0h26v26H0z" fill="#e0e0e0"/><path d="M0 4h5v18H0zM18 7h8v14h-8zM5 10h14v6H5z" fill="#222"/><path d="M4 6L9 0M10 6l5-6M18 5l5-5M8 26l5-6M14 26l5-6" class="k"/><ellipse cx="12" cy="13" rx="7" ry="9" class="r"/></symbol>
<symbol id="frame" viewBox="0 0 26 26"><path d="M7 5h12M7 21h12M11 5v16M15 5v16M13 3v20" fill="none" stroke="#666"/><path d="M3 1h4v9H3zM19 1h4v9h-4zM3 16h4v9H3zM19 16h4v9h-4z" fill="#e6eaa8" stroke="#777"/></symbol>
<symbol id="hammer" viewBox="0 0 26 26"><path d="M1 0v7M1 3h18v5H6M20 13H6v8h12" fill="none" stroke="#2c70b0" stroke-width="1.600"/><path d="M10 10l12 14" stroke="#d8a850" stroke-width="3"/><path d="M1 12l8-6 6 1-5 6z" fill="#999"/><path d="M24 19v7" stroke="#1c3c90" stroke-width="3"/></symbol>
<symbol id="insert" viewBox="0 0 26 26"><path d="M8 1h9v7H8z" class="gk"/><path d="M9 8h7v11h5v7H4v-7h5z" fill="#c7d465" stroke="#56602a"/><path d="M2 8h22" class="r"/><path d="M6 25l12-13M12 26l8-8" class="k"/></symbol>
<symbol id="press" viewBox="0 0 26 26"><path d="M0 13h5v6h4v4h8v-4h4v-6h5v13H0z" fill="#ddd" stroke="#888"/><path d="M6 4h14v6h-4v8h-6v-8H6z" fill="#f8e0d8" stroke="#b83c34"/><path d="M13 0v4" stroke="#e08030" stroke-width="3"/><path d="M1 25l6-6M8 26l3-3M18 26l7-7" fill="none" stroke="#888"/></symbol>
<symbol id="grid" viewBox="0 0 26 26"><path d="M1 1h24v24H1z" fill="#f5f5f5"/><path d="M1 19h24v6H1z" fill="#e6e87a"/><path d="M1 1h24v24H1zM1 5h24M1 9h24M1 13h24M1 17h24M1 21h24M7 1v24M19 1v24" fill="none" stroke="#555"/></symbol>
<symbol id="draw" viewBox="0 0 26 26"><path d="M0 1h26v25H0z" fill="#d5dbe4" stroke="#8890a0"/><path d="M5 4h16v13H5zM5 8h16M8 11h10M8 14h10" fill="#eee" stroke="#777"/><path d="M15 20h9v4h-9z" fill="#fff"/></symbol>
<symbol id="eye" viewBox="0 0 26 26"><path d="M1 17Q13 5 25 17q-12 7-24 0z" fill="#e8eadf" stroke="#777"/><circle cx="14" cy="15" r="5" fill="#6c9a3c"/><circle cx="14" cy="15" r="2" fill="#222"/><path d="M1 14Q13 2 25 14M5 9L3 6M9 7L8 3M14 6V2M19 7l2-4M23 10l2-3" class="k"/></symbol>
<symbol id="bom" viewBox="0 0 26 26"><path d="M7 1h12l6 6v18H7z" fill="#eeecfa" stroke="#6a64a8"/><path d="M11 9h9M11 13h10M11 17h10M11 21h10" class="r" stroke-width="1.500"/><path d="M2 6h5v14l2 1v5H0v-5l2-1z" fill="#7d9ede" stroke="#3d5590"/></symbol>
<symbol id="gtree" viewBox="0 0 26 26"><path d="M5 3v16h5M5 8h6M5 13h6" class="s3"/><circle cx="18" cy="6" r="4" class="lg"/><circle cx="18" cy="15" r="5" class="lg"/><path d="M10 18h5v6h-5z" class="lg"/></symbol>
<symbol id="gfil" viewBox="0 0 26 26"><path d="M3 9q4-8 7 0M7 7l3 3 2-4" class="s3"/><path d="M11 13h12l-4 6v6h-3v-6z" class="lg"/></symbol>
<symbol id="rfil" viewBox="0 0 26 26"><path d="M2 1h22v24H2z" fill="#fff" stroke="#c04038" stroke-width="1.500"/><path d="M9 4v11M4 9h10" class="r w"/><path d="M12 14h10l-4 4v5h-3v-5z" fill="#f0b83c"/></symbol>
<symbol id="gmov" viewBox="0 0 26 26"><path d="M3 9q4-10 10 0M14 10v14M8 17h12M10 14l-3 3 3 3M18 14l3 3-3 3" class="s3"/></symbol>
<symbol id="gsel" viewBox="0 0 26 26"><path d="M3 8q4-8 8 0h12v5H12" class="s3"/><path d="M13 15h4v4h-4zM19 20h4v4h-4z" class="lg"/></symbol>
<symbol id="box" viewBox="0 0 26 26"><path d="M4 5h17v16H4z" fill="none" stroke="#333" stroke-width="1.500" stroke-dasharray="3 2"/><circle cx="4" cy="4" r="2" class="rf"/><circle cx="21" cy="21" r="2" class="rf"/></symbol>
<symbol id="cyl" viewBox="0 0 26 26"><path d="M2 11l9-6 12 3v9l-9 6-10-4z" fill="url(#gg)" stroke="#444"/><path d="M8 14q1-7 9-6M14 14l9-6" class="k"/><path d="M17 6v9" class="r"/></symbol>
<symbol id="bbox" viewBox="0 0 26 26"><path d="M2 8l11-4 11 4v13l-11 4-11-4z" fill="#9cc6f2" stroke="#5b88c4"/><path d="M13 12l11-4v13l-11 4z" fill="#4b8ada"/><path d="M13 0v12" class="r"/></symbol>
<symbol id="snap" viewBox="0 0 26 26"><path d="M1 3l6 4-6 4z" class="gf"/><path d="M1 16l6 4-6 4z" class="rf"/><path d="M15 5v18M6 14h18M9 8l12 12M21 8L9 20" stroke="#333" stroke-width="1.500"/><circle cx="15" cy="14" r="5" fill="#f2e23c" stroke="#333"/><circle cx="15" cy="5" r="2" fill="#333"/><circle cx="15" cy="23" r="2" fill="#333"/><circle cx="24" cy="14" r="2" fill="#333"/><circle cx="6" cy="14" r="2" fill="#333"/></symbol>
<symbol id="s1" viewBox="0 0 26 26"><path d="M6 21L20 6" class="k w"/><circle cx="20" cy="6" r="2.600" class="rf"/></symbol>
<symbol id="s2" viewBox="0 0 26 26"><path d="M5 22L21 5" class="k w"/><circle cx="13" cy="14" r="2.800" class="rf"/></symbol>
<symbol id="sc3" viewBox="0 0 26 26"><path d="M6 3q7 1 7 9t7 12" class="k w"/><circle cx="13" cy="12" r="2.600" class="rf"/></symbol>
<symbol id="s4" viewBox="0 0 26 26"><path d="M5 16l5-10 7 15 5-8" fill="none" stroke="#703a90" stroke-width="2"/><circle cx="5" cy="15" r="2.600" class="rf"/><circle cx="10" cy="6" r="2.600" class="rf"/><circle cx="17" cy="21" r="2.600" class="rf"/><circle cx="22" cy="13" r="2.600" class="rf"/></symbol>
<symbol id="s5" viewBox="0 0 26 26"><path d="M13 4v20M4 18q1-8 9-8t9 8" class="k w"/><circle cx="13" cy="10" r="2.500" class="rf"/></symbol>
<symbol id="s6" viewBox="0 0 26 26"><circle cx="13" cy="13" r="9" fill="none" stroke="#222" stroke-width="2"/><circle cx="13" cy="13" r="2.800" class="rf"/></symbol>
<symbol id="s7" viewBox="0 0 26 26"><circle cx="13" cy="13" r="8" class="k"/><circle cx="13" cy="5" r="2.600" class="rf"/><circle cx="13" cy="21" r="2.600" class="rf"/><circle cx="5" cy="13" r="2.600" class="rf"/><circle cx="21" cy="13" r="2.600" class="rf"/></symbol>
<symbol id="s8" viewBox="0 0 26 26"><path d="M13 4v18M4 13h18" class="k w"/><circle cx="13" cy="13" r="2.600" class="rf"/></symbol>
<symbol id="s9" viewBox="0 0 26 26"><path d="M6 22L20 5" class="k w"/><circle cx="9" cy="19" r="2.600" class="rf"/></symbol>
<symbol id="s10" viewBox="0 0 26 26"><path d="M4 10q2-8 9-6l10 1q-5 5-4 9l-6 10Q5 21 6 16z" fill="#c2daf4" stroke="#6a8cc0"/><circle cx="14" cy="9" r="2.600" class="rf"/></symbol>
<symbol id="s11" viewBox="0 0 26 26"><path d="M6 3l13 5v17L6 20zM10 5v17M15 7v16M6 9l13 5M6 14l13 5" class="k" stroke-width="1.500"/><circle cx="18" cy="17" r="2" class="rf"/></symbol>
<symbol id="gear" viewBox="0 0 26 26"><circle cx="13" cy="13" r="6" fill="none" stroke="#222" stroke-width="1.800"/><circle cx="13" cy="13" r="1.500"/><path d="M13 4v3M13 19v3M4 13h3M19 13h3M7 7l2 2M17 17l2 2M19 7l-2 2M9 17l-2 2" stroke="#222" stroke-width="2.500"/></symbol>
<symbol id="asm" viewBox="0 0 26 26"><path d="M1 8h6v5H1zM7 8h6v5H7zM3 2h6v5H3zM15 20h7v5h-7z" fill="#f8cc30" stroke="#c08a10"/><path d="M3 2l2-2h6v5l-2 2M7 8l2-2h6v5l-2 2M15 20l2-3h7v5l-2 3" fill="#e8a818" stroke="#c08a10"/><path d="M5 14v12M5 20h6" class="b w"/><path d="M15 13h11" class="k"/></symbol>
<symbol id="cons" viewBox="0 0 26 26"><path d="M4 1l8 5-8 5zM21 1l-8 5 8 5z" fill="#2020b0"/><path d="M13 0v26" class="k d"/><path d="M1 16h10v9H1z" fill="#f6e83c" stroke="#444"/><path d="M15 16l10 6v3H15z" fill="#c81e1e" stroke="#444"/></symbol>
<symbol id="partn" viewBox="0 0 26 26"><path d="M1 2v8q6 3 12 0V2z" fill="#d880cc" stroke="#7c2c72"/><ellipse cx="7" cy="2.500" rx="6" ry="2" fill="#f0c0e8" stroke="#7c2c72"/><path d="M6 13v12M6 19h6" class="b w"/><path d="M15 9h11" class="k"/><circle cx="19" cy="20" r="5" fill="#f6d8f0" stroke="#7c2c72" stroke-width="1.500"/><circle cx="19" cy="20" r="1.500" fill="#7c2c72"/></symbol>
<symbol id="books" viewBox="0 0 26 26"><path d="M0 6h7v18H0z" fill="#f2923a" stroke="#b8601c"/><path d="M7 6h7v18H7z" fill="#28b43c" stroke="#0c7424"/><path d="M14 6h6v18h-6z" fill="#3c88e0" stroke="#1c4c98"/><path d="M20 6l6-5v17l-6 6z" fill="#3c8cf0" stroke="#1c4c98"/><path d="M0 6l6-5h20l-6 5z" fill="#f4f4f0" stroke="#999"/><path d="M7 6l6-5M14 6l6-5" stroke="#0c7424"/><path d="M15 10h4M15 14h4M2 9h3M9 9h3M15 18h4" stroke="#ccd8e8"/></symbol>
<symbol id="info" viewBox="0 0 26 26"><circle cx="9" cy="17.500" r="8.500" fill="#2a72d0"/><path d="M9 2q14 0 16 15M9 7q9 1 11 10" fill="none" stroke="#4a70b8" stroke-width="3"/><path d="M9 11v3M9 16v6M6 22h6M7 16h2" stroke="#fff" stroke-width="2.500"/></symbol>
<symbol id="page" viewBox="0 0 26 26"><path d="M3 1h14l6 6v18H3z" fill="#fff" stroke="#4468b8" stroke-width="1.500"/><path d="M17 1v6h6" fill="none" stroke="#4468b8"/><circle cx="13" cy="16" r="6.500" fill="#4b9e58"/><path d="M10 20l3-9 3 7z" fill="#a8d4e8"/></symbol>
<symbol id="clock" viewBox="0 0 26 26"><circle cx="13" cy="13" r="12" fill="#dce8fa" stroke="#808898" stroke-width="2"/><path d="M13 4v9h8" fill="none" stroke="#111" stroke-width="2"/><path d="M4 13h2M13 20v2M7 7l1 1M19 19l-1-1" stroke="#445"/></symbol>
<symbol id="wand" viewBox="0 0 26 26"><path d="M1 0h10v26H1z" fill="url(#gr)"/><path d="M12 8l12 16" stroke="#111" stroke-width="3"/><circle cx="12" cy="6" r="4" fill="#fff" opacity=".8"/></symbol>
<symbol id="wand2" viewBox="0 0 26 26"><path d="M3 2h6v20H3z" fill="#5aa0e0" stroke="#2a5ca0"/><path d="M3 8l6-4M3 14l6-4M3 20l6-4M11 6h15l-14 8" stroke="#2a5ca0" fill="none"/><path d="M1 24h10" stroke="#b8b83c" stroke-width="2"/><path d="M12 8l11 15" stroke="#111" stroke-width="3"/><circle cx="12" cy="5" r="3" fill="#fff"/></symbol>
<symbol id="robot" viewBox="0 0 26 26"><path d="M11 3q7-3 12 0v3l-4-1-6 1-4 6 6 5" fill="none" stroke="#666" stroke-width="2.500"/><path d="M2 16q5-4 9 1l8 2v4H5z" fill="#9a9aa2" stroke="#555"/><path d="M2 21q4-3 8 0v4H2z" fill="#f09030"/></symbol>
<symbol id="role" viewBox="0 0 26 26"><path d="M1 4l8-3v22l-8 3z" fill="#e6e6e6" stroke="#777"/><path d="M9 3h17v20H9z" fill="#fff" stroke="#777" stroke-width="1.500"/><path d="M11 6h13v11H11z" fill="#d83028"/><path d="M14 6h7l-1 6h-5z" fill="#8cc8f0"/></symbol>
<symbol id="role2" viewBox="0 0 26 26"><path d="M1 4l8-3v22l-8 3z" fill="#e6e6e6" stroke="#777"/><path d="M9 3h17v20H9z" fill="#fff" stroke="#777" stroke-width="1.500"/><circle cx="14" cy="8" r="2" fill="#2a6cc8"/><circle cx="14" cy="13" r="2" fill="#28a03c"/><circle cx="14" cy="18" r="2" fill="#d83028"/><path d="M18 8h6M18 13h6M18 18h6" class="k"/></symbol>
<symbol id="link" viewBox="0 0 26 26"><path d="M1 14l6-3v11l-6 4z" fill="#48b84c" stroke="#333" stroke-width="1.500"/><circle cx="20" cy="6" r="5.500" fill="#3cb03c"/><path d="M20 12v8H10M13 17l-4 3 4 3" class="k"/></symbol>
<symbol id="part" viewBox="0 0 26 26"><path d="M6 3l8-3 4 3v11l6 2v6l-10 4L2 20z" fill="#2e6ed6" stroke="#1b4aa6"/><path d="M8 6l4-1v12l-4-1z" fill="#cfe2ff"/></symbol>
<symbol id="mag" viewBox="0 0 26 26"><circle cx="17" cy="9" r="7" fill="none" stroke="#333" stroke-width="1.600"/><circle cx="17" cy="9" r="4" fill="none" stroke="#888"/><path d="M12 14l-8 9 1 1 9-8" fill="#ccc" stroke="#333" stroke-width="1.500"/></symbol>
<symbol id="w-min" viewBox="0 0 16 16"><path d="M3 13h10" stroke="currentColor" stroke-width="2"/></symbol>
<symbol id="w-max" viewBox="0 0 16 16"><path d="M5 6V2h10v7h-4M5 3h10M1 7h10v7H1zM1 8h10" fill="none" stroke="currentColor" stroke-width="1.500"/></symbol>
<symbol id="w-close" viewBox="0 0 16 16"><path d="M2 2l12 12M14 2L2 14" stroke="currentColor" stroke-width="2"/></symbol>
</svg>

<header class="titlebar">
<span class="nx">NX</span>
<h1 class="title">湖南小丸子教育 NX10.0 - 建模 - [YS07-ASM-licjuanzhong.prt （修改的） ]</h1>
<span class="brand">SIEMENS</span>
<div class="winctl">
<button aria-label="最小化"><svg><use href="#w-min"/></svg></button><button aria-label="还原"><svg><use href="#w-max"/></svg></button><button aria-label="关闭"><svg><use href="#w-close"/></svg></button>
</div>
</header>

<nav class="menubar">
<i class="grip"></i>
<svg class="particon"><use href="#part"/></svg>
<button>文件(<u>F</u>)</button><button>编辑(<u>E</u>)</button><button>视图(<u>V</u>)</button><button>插入(<u>S</u>)</button><button>格式(<u>R</u>)</button><button>工具(<u>T</u>)</button><button>装配(<u>A</u>)</button><button>信息(<u>I</u>)</button><button class="wide">分析(<u>L</u>)</button><button>首选项(<u>P</u>)</button><button>应用模块(<u>N</u>)</button><button>窗口(<u>O</u>)</button><button>GC工具箱</button><button><u>M</u>EX(Mold)</button><button>燕秀UG模具6.32</button><button>帮助(<u>H</u>)</button><button>HB_MOULD <u>M</u>6.5</button>
<div class="winctl dark">
<button aria-label="最小化文档"><svg><use href="#w-min"/></svg></button><button aria-label="还原文档"><svg><use href="#w-max"/></svg></button><button aria-label="关闭文档"><svg><use href="#w-close"/></svg></button>
</div>
</nav>

<div class="row first">
<div class="bar"><i class="grip"></i>
<button class="tool" aria-label="启动"><svg><use href="#start"/></svg></button><span class="label">启动</span><button class="drop" aria-label="启动选项"></button>
<button class="tool" aria-label="新建"><svg><use href="#new"/></svg></button>
<button class="tool" aria-label="打开"><svg><use href="#open"/></svg></button>
<button class="tool" aria-label="保存"><svg><use href="#save"/></svg></button><i class="sep"></i>
<button class="tool" aria-label="剪切"><svg><use href="#cut"/></svg></button>
<button class="tool" aria-label="复制"><svg><use href="#copy"/></svg></button>
<button class="tool" aria-label="粘贴"><svg><use href="#paste"/></svg></button>
<button class="tool" aria-label="删除"><svg><use href="#del"/></svg></button><i class="sep"></i>
<button class="tool" aria-label="撤消"><svg><use href="#undo"/></svg></button><button class="drop" aria-label="撤消列表"></button>
<button class="tool" aria-label="重做"><svg><use href="#redo"/></svg></button><i class="sep"></i>
<button class="tool" aria-label="窗口"><svg><use href="#win"/></svg></button><button class="drop" aria-label="窗口列表"></button><i class="sep"></i>
<div class="search"><input type="text" aria-label="查找命令" value="查找命令"><svg><use href="#mag"/></svg></div>
<button class="more" aria-label="工具栏选项"></button></div>
<div class="bar"><i class="grip"></i>
<button class="tool" aria-label="适合窗口"><svg><use href="#fit"/></svg></button><button class="drop" aria-label="缩放选项"></button>
<button class="tool" aria-label="定向视图"><svg><use href="#orient"/></svg></button><button class="drop" aria-label="定向选项"></button>
<button class="tool" aria-label="着色"><svg><use href="#cube"/></svg></button><button class="drop" aria-label="渲染样式"></button>
<button class="tool" aria-label="背景"><svg><use href="#bgsq"/></svg></button><button class="drop" aria-label="背景选项"></button><i class="sep"></i>
<button class="tool" aria-label="剪切截面"><svg><use href="#clip"/></svg></button>
<button class="tool" aria-label="编辑截面"><svg><use href="#clip2"/></svg></button><button class="more" aria-label="工具栏选项"></button></div>
<div class="bar"><i class="grip"></i>
<button class="tool" aria-label="草图"><svg><use href="#sheet"/></svg></button><button class="drop" aria-label="草图选项"></button><i class="sep"></i>
<button class="tool" aria-label="完成草图"><svg><use href="#flag"/></svg></button>
<button class="tool" aria-label="轮廓"><svg><use href="#prof"/></svg></button><button class="drop" aria-label="轮廓选项"></button>
<button class="tool" aria-label="圆"><svg><use href="#circ"/></svg></button>
<button class="tool" aria-label="圆角"><svg><use href="#arc"/></svg></button>
<button class="tool" aria-label="矩形"><svg><use href="#rect"/></svg></button>
<button class="tool" aria-label="点"><svg><use href="#plus"/></svg></button><i class="sep"></i>
<button class="tool" aria-label="曲线"><svg><use href="#gcurve"/></svg></button><button class="drop" aria-label="曲线选项"></button><i class="sep"></i>
<button class="tool" aria-label="快速尺寸"><svg><use href="#gdim"/></svg></button><button class="drop" aria-label="尺寸选项"></button><i class="sep"></i>
<button class="tool" aria-label="几何约束"><svg><use href="#gperp"/></svg></button><i class="sep"></i>
<button class="tool" aria-label="拉伸"><svg><use href="#extr"/></svg></button><button class="drop" aria-label="拉伸选项"></button>
<button class="tool" aria-label="偏置区域"><svg><use href="#lift"/></svg></button><button class="drop" aria-label="偏置选项"></button>
<button class="tool" aria-label="合并"><svg><use href="#bool"/></svg></button><button class="drop" aria-label="合并选项"></button>
<button class="tool" aria-label="抽壳"><svg><use href="#shellb"/></svg></button><button class="drop" aria-label="抽壳选项"></button>
<button class="tool" aria-label="边倒圆"><svg><use href="#blend"/></svg></button><button class="drop" aria-label="倒圆选项"></button><i class="sep"></i>
<button class="tool" aria-label="删除面"><svg><use href="#pdel"/></svg></button><button class="more wide" aria-label="更多">»</button></div>
<div class="bar grow"><i class="grip"></i>
<label class="combo layerbox"><select aria-label="工作图层"><option>1</option></select></label>
<button class="tool" aria-label="图层设置"><svg><use href="#layer"/></svg></button>
<button class="tool" aria-label="图层视图"><svg><use href="#layer"/></svg></button><button class="drop" aria-label="图层选项"></button>
<button class="tool" aria-label="WCS"><svg><use href="#tree"/></svg></button><button class="drop" aria-label="WCS选项"></button><i class="sep"></i>
<button class="tool" aria-label="选择"><svg><use href="#pick"/></svg></button><i class="sep"></i>
<button class="tool" aria-label="显示"><svg><use href="#dmd"/></svg></button><button class="drop" aria-label="显示选项"></button>
<button class="tool" aria-label="隐藏"><svg><use href="#dmd"/></svg></button>
<button class="tool" aria-label="反转显示"><svg><use href="#dmd2"/></svg></button><i class="sep"></i>
<button class="tool" aria-label="测量距离"><svg><use href="#ruler"/></svg></button><button class="drop" aria-label="测量选项"></button>
<button class="more wide end" aria-label="更多">»</button></div>
</div>

<div class="row">
<div class="bar"><i class="grip"></i>
<button class="tool" aria-label="基准平面"><svg><use href="#sheet"/></svg></button><button class="drop" aria-label="基准选项"></button>
<button class="tool" aria-label="拉伸"><svg><use href="#extr"/></svg></button><button class="drop" aria-label="拉伸选项"></button>
<button class="tool" aria-label="拉伸体"><svg><use href="#extr"/></svg></button>
<button class="tool" aria-label="旋转"><svg><use href="#rev"/></svg></button>
<button class="tool" aria-label="孔"><svg><use href="#hole"/></svg></button>
<button class="tool" aria-label="凸起"><svg><use href="#emb"/></svg></button><i class="sep"></i>
<button class="tool" aria-label="阵列特征"><svg><use href="#patt"/></svg></button><button class="drop" aria-label="阵列选项"></button>
<button class="tool" aria-label="阵列几何"><svg><use href="#patg"/></svg></button>
<button class="tool" aria-label="求和"><svg><use href="#unite"/></svg></button><button class="drop" aria-label="布尔选项"></button>
<button class="tool" aria-label="缝合"><svg><use href="#sew"/></svg></button>
<button class="tool" aria-label="修剪体"><svg><use href="#bool"/></svg></button><button class="drop" aria-label="修剪选项"></button>
<button class="tool" aria-label="拆分体"><svg><use href="#bool"/></svg></button>
<button class="tool" aria-label="修剪片体"><svg><use href="#draftf"/></svg></button>
<button class="tool" aria-label="分割面"><svg><use href="#split"/></svg></button>
<button class="tool" aria-label="删除体"><svg><use href="#delb"/></svg></button>
<button class="tool" aria-label="抽壳"><svg><use href="#shellb"/></svg></button><button class="drop" aria-label="抽壳选项"></button>
<button class="tool" aria-label="加厚"><svg><use href="#shellb"/></svg></button>
<button class="tool" aria-label="替换面"><svg><use href="#repl"/></svg></button>
<button class="tool" aria-label="缩放体"><svg><use href="#dash"/></svg></button><i class="sep"></i>
<button class="tool" aria-label="边倒圆"><svg><use href="#blend"/></svg></button><button class="drop" aria-label="倒圆选项"></button>
<button class="tool" aria-label="面倒圆"><svg><use href="#blend"/></svg></button>
<button class="tool" aria-label="软倒圆"><svg><use href="#flange"/></svg></button>
<button class="tool" aria-label="倒斜角"><svg><use href="#chamf"/></svg></button>
<button class="tool" aria-label="拔模"><svg><use href="#draft"/></svg></button><button class="more gap" aria-label="工具栏选项"></button></div>
<div class="bar"><i class="grip"></i>
<button class="tool" aria-label="直纹"><svg><use href="#surf"/></svg></button>
<button class="tool" aria-label="曲线网格"><svg><use href="#surf2"/></svg></button>
<button class="tool" aria-label="N边曲面"><svg><use href="#surf3"/></svg></button>
<button class="tool" aria-label="X型"><svg><use href="#mesh"/></svg></button>
<button class="tool" aria-label="扫掠"><svg><use href="#circs"/></svg></button>
<button class="tool" aria-label="剖切曲面"><svg><use href="#sweep"/></svg></button>
<button class="tool" aria-label="延伸片体"><svg><use href="#gsurf"/></svg></button><button class="drop" aria-label="曲面选项"></button><button class="more" aria-label="工具栏选项"></button></div>
<div class="bar"><i class="grip"></i>
<button class="tool" aria-label="编辑参数"><svg><use href="#keydoc"/></svg></button>
<button class="tool" aria-label="修剪曲线"><svg><use href="#c1"/></svg></button>
<button class="tool" aria-label="修剪拐角"><svg><use href="#c2"/></svg></button>
<button class="tool" aria-label="分割曲线"><svg><use href="#c3"/></svg></button>
<button class="tool" aria-label="编辑圆角"><svg><use href="#c4"/></svg></button>
<button class="tool" aria-label="曲线长度"><svg><use href="#c5"/></svg></button>
<button class="tool" aria-label="光顺样条"><svg><use href="#c6"/></svg></button><button class="more" aria-label="工具栏选项"></button></div>
</div>

<div class="row">
<div class="bar"><i class="grip"></i>
<button class="tool" aria-label="直线"><svg><use href="#line"/></svg></button><button class="drop" aria-label="直线选项"></button>
<button class="tool" aria-label="两点线"><svg><use href="#line"/></svg></button>
<button class="tool" aria-label="圆弧"><svg><use href="#arcp"/></svg></button>
<button class="tool" aria-label="直线和圆弧"><svg><use href="#lnarc"/></svg></button>
<button class="tool" aria-label="曲面上的曲线"><svg><use href="#sheetc"/></svg></button>
<button class="tool" aria-label="艺术样条"><svg><use href="#spline"/></svg></button>
<button class="tool glyph serif" aria-label="文本">A</button>
<button class="tool" aria-label="偏置曲线"><svg><use href="#offc"/></svg></button>
<button class="tool" aria-label="面上偏置"><svg><use href="#ppatch"/></svg></button>
<button class="tool" aria-label="投影曲线"><svg><use href="#proj"/></svg></button>
<button class="tool" aria-label="组合投影"><svg><use href="#proj2"/></svg></button>
<button class="tool" aria-label="镜像曲线"><svg><use href="#comb"/></svg></button>
<button class="tool" aria-label="抽取曲线"><svg><use href="#isect"/></svg></button>
<button class="tool" aria-label="相交曲线"><svg><use href="#isect2"/></svg></button>
<button class="tool" aria-label="缠绕曲线"><svg><use href="#wrap"/></svg></button><button class="more" aria-label="工具栏选项"></button></div>
<div class="bar"><i class="grip"></i>
<button class="tool" aria-label="曲面补片"><svg><use href="#ndia"/></svg></button><i class="sep"></i>
<button class="tool" aria-label="等参数"><svg><use href="#nx"/></svg></button><button class="more" aria-label="工具栏选项"></button></div>
<div class="bar"><i class="grip"></i>
<button class="tool" aria-label="移动面"><svg><use href="#mvf"/></svg></button><i class="sep"></i>
<button class="tool" aria-label="赋材料"><svg><use href="#pour"/></svg></button>
<button class="tool" aria-label="移除参数"><svg><use href="#xdim"/></svg></button><button class="more" aria-label="工具栏选项"></button></div>
<div class="bar"><i class="grip"></i>
<button class="tool" aria-label="移动面"><svg><use href="#pmove"/></svg></button><button class="drop" aria-label="移动选项"></button>
<button class="tool" aria-label="移动区域"><svg><use href="#pmove"/></svg></button>
<button class="tool" aria-label="拉出面"><svg><use href="#ppull"/></svg></button>
<button class="tool" aria-label="替换面"><svg><use href="#pcopyf"/></svg></button>
<button class="tool" aria-label="调整圆柱"><svg><use href="#pcyl"/></svg></button>
<button class="tool" aria-label="编组面"><svg><use href="#pgrp"/></svg></button>
<button class="tool" aria-label="调整倒圆"><svg><use href="#pblend"/></svg></button><button class="drop" aria-label="倒圆选项"></button>
<button class="tool" aria-label="删除面"><svg><use href="#pdel"/></svg></button>
<button class="tool" aria-label="复制面"><svg><use href="#pcopy"/></svg></button><button class="drop" aria-label="复制选项"></button>
<button class="tool" aria-label="设为共面"><svg><use href="#pstack"/></svg></button><button class="drop" aria-label="关联选项"></button>
<button class="tool" aria-label="线性尺寸"><svg><use href="#pdim"/></svg></button><button class="drop" aria-label="尺寸选项"></button>
<button class="tool" aria-label="优化"><svg><use href="#shield"/></svg></button><button class="drop" aria-label="优化选项"></button><button class="more" aria-label="工具栏选项"></button></div>
<div class="bar"><i class="grip"></i>
<button class="tool glyph" aria-label="MOULD"><b class="mould">M</b></button>
<button class="tool" aria-label="螺钉"><svg><use href="#bolt"/></svg></button><button class="drop" aria-label="螺钉选项"></button>
<button class="tool" aria-label="镶件"><svg><use href="#gblk"/></svg></button><button class="drop" aria-label="镶件选项"></button>
<button class="tool" aria-label="水路"><svg><use href="#ell"/></svg></button><button class="drop" aria-label="水路选项"></button><i class="sep"></i>
<button class="tool" aria-label="指定"><svg><use href="#hand"/></svg></button>
<button class="tool" aria-label="收藏"><svg><use href="#star"/></svg></button>
<button class="tool" aria-label="历史"><svg><use href="#clk"/></svg></button>
<button class="tool" aria-label="过滤"><svg><use href="#funnel"/></svg></button>
<button class="tool" aria-label="结构"><svg><use href="#org"/></svg></button><i class="sep"></i>
<button class="tool" aria-label="标准件"><svg><use href="#bluebolt"/></svg></button>
<button class="tool" aria-label="表格"><svg><use href="#tbl"/></svg></button>
<button class="tool" aria-label="零件说明"><svg><use href="#bnote"/></svg></button><i class="sep"></i>
<button class="tool" aria-label="注释"><svg viewBox="0 0 26 26"><path d="M14 8h11M14 12h11M12 16h13M16 20h9M18 5v17" class="r"/><text x="8" y="20" text-anchor="middle" class="san">A</text></svg></button><button class="drop" aria-label="注释选项"></button><i class="sep"></i>
<button class="tool glyph serif" aria-label="帮助">?</button><button class="drop" aria-label="帮助选项"></button><button class="more" aria-label="工具栏选项"></button></div>
</div>

<div class="row">
<div class="bar"><i class="grip"></i>
<button class="tool" aria-label="初始化项目"><svg><use href="#doctree"/></svg></button>
<button class="tool" aria-label="验证"><svg><use href="#chk"/></svg></button>
<button class="tool" aria-label="多腔"><svg><use href="#quad"/></svg></button>
<button class="tool" aria-label="模具坐标系"><svg viewBox="0 0 26 26"><path d="M3 17V2M1 5l2-3 2 3" class="b"/><path d="M3 17l12-5" fill="none" stroke="#3a4"/><path d="M11 11l5 1-4 3z" class="gf"/><path d="M3 17l12 6" class="r"/><circle cx="3" cy="17" r="1.500" class="rf"/><circle cx="15" cy="23" r="2" class="rf"/><text x="7" y="8" class="ax">Z</text><text x="19" y="14" class="ax">Y</text><text x="18" y="25" class="ax">X</text></svg></button>
<button class="tool" aria-label="工件"><svg><use href="#cav"/></svg></button>
<button class="tool" aria-label="型腔布局"><svg><use href="#wire"/></svg></button>
<button class="tool" aria-label="镶块"><svg><use href="#brack"/></svg></button>
<button class="tool" aria-label="模具工具"><svg><use href="#tools"/></svg></button>
<button class="tool" aria-label="分型"><svg><use href="#mold"/></svg></button>
<button class="tool" aria-label="模架"><svg><use href="#base"/></svg></button>
<button class="tool" aria-label="标准件"><svg><use href="#pin"/></svg></button>
<button class="tool" aria-label="零件库"><svg><use href="#pinc"/></svg></button>
<button class="tool" aria-label="顶杆"><svg><use href="#eject"/></svg></button>
<button class="tool" aria-label="滑块"><svg><use href="#slide"/></svg></button>
<button class="tool" aria-label="斜顶"><svg><use href="#lifter"/></svg></button>
<button class="tool" aria-label="流道"><svg><use href="#runner"/></svg></button>
<button class="tool" aria-label="框架"><svg><use href="#frame"/></svg></button>
<button class="tool" aria-label="冷却"><svg><use href="#hammer"/></svg></button>
<button class="tool" aria-label="子镶块"><svg><use href="#insert"/></svg></button><button class="drop" aria-label="镶块选项"></button>
<button class="tool" aria-label="电极"><svg><use href="#press"/></svg></button>
<button class="tool" aria-label="物料清单"><svg><use href="#grid"/></svg></button>
<button class="tool" aria-label="模具图纸"><svg><use href="#draw"/></svg></button>
<button class="tool" aria-label="视图管理"><svg><use href="#eye"/></svg></button>
<button class="tool" aria-label="概念设计"><svg><use href="#bom"/></svg></button><button class="more gap" aria-label="工具栏选项"></button></div>
</div>

<div class="selbar">
<label class="combo filter"><select aria-label="选择过滤器"><option>没有选择过滤器</option></select></label>
<label class="combo scope"><select aria-label="选择范围"><option>整个装配</option></select></label>
<button class="mini" aria-label="装配树"><svg><use href="#gtree"/></svg></button><i class="sep"></i>
<button class="mini" aria-label="重置过滤"><svg><use href="#gfil"/></svg></button>
<button class="mini" aria-label="过滤器"><svg><use href="#rfil"/></svg></button><button class="drop" aria-label="过滤选项"></button>
<button class="mini" aria-label="移动选择"><svg><use href="#gmov"/></svg></button>
<button class="mini" aria-label="全选"><svg><use href="#gsel"/></svg></button><i class="sep"></i>
<button class="mini" aria-label="矩形选择"><svg><use href="#box"/></svg></button><button class="drop" aria-label="选择形状"></button><i class="sep"></i>
<button class="mini" aria-label="允许隐藏"><svg><use href="#cyl"/></svg></button>
<button class="mini" aria-label="高亮体"><svg><use href="#bbox"/></svg></button><i class="sep"></i>
<button class="mini on" aria-label="捕捉点"><svg><use href="#snap"/></svg></button>
<button class="mini on" aria-label="端点"><svg><use href="#s1"/></svg></button>
<button class="mini on" aria-label="中点"><svg><use href="#s2"/></svg></button>
<button class="mini" aria-label="控制点"><svg><use href="#sc3"/></svg></button>
<button class="mini on" aria-label="极点"><svg><use href="#s4"/></svg></button>
<button class="mini" aria-label="交点"><svg><use href="#s5"/></svg></button>
<button class="mini on" aria-label="圆心"><svg><use href="#s6"/></svg></button>
<button class="mini" aria-label="象限点"><svg><use href="#s7"/></svg></button>
<button class="mini on" aria-label="现有点"><svg><use href="#s8"/></svg></button>
<button class="mini on" aria-label="线上点"><svg><use href="#s9"/></svg></button>
<button class="mini" aria-label="面上点"><svg><use href="#s10"/></svg></button><i class="sep"></i>
<button class="mini" aria-label="栅格点"><svg><use href="#s11"/></svg></button>
<button class="more end" aria-label="选择条选项"></button>
</div>

<main class="work">
<aside class="side">
<button class="cfg" aria-label="资源条选项"><svg><use href="#gear"/></svg></button>
<div class="sgroup">
<button aria-label="装配导航器"><svg><use href="#asm"/></svg></button>
<button aria-label="约束导航器"><svg><use href="#cons"/></svg></button>
<button aria-label="部件导航器"><svg><use href="#partn"/></svg></button>
<button aria-label="重用库"><svg><use href="#books"/></svg></button>
</div>
<div class="sgroup"><button aria-label="HD3D工具"><svg><use href="#info"/></svg></button></div>
<div class="sgroup"><button class="active" aria-label="Web浏览器"><svg><use href="#page"/></svg></button></div>
<div class="sgroup">
<button aria-label="历史记录"><svg><use href="#clock"/></svg></button>
<button aria-label="系统材料"><svg><use href="#wand"/></svg></button>
<button aria-label="加工向导"><svg><use href="#wand2"/></svg></button>
<button aria-label="机器人"><svg><use href="#robot"/></svg></button>
<button aria-label="角色"><svg><use href="#role"/></svg></button>
<button aria-label="系统场景"><svg><use href="#role2"/></svg></button>
<button aria-label="关联"><svg><use href="#link"/></svg></button>
</div>
</aside>
<section class="view" aria-label="模型视图">
<svg class="scene" viewBox="45 258 2199 822" preserveAspectRatio="xMidYMid slice">
<!-- slide rail and wedge -->
<path d="M1277 319h80v80h51v498l-14 81h-79l-7-40V759h-31z" fill="#0ff" stroke="#1f8f96"/>
<path d="M1277 319h17v80h-17z" fill="#00c8cb" stroke="#1b8a90"/>
<path d="M1341 319h16v80h-16z" fill="#00f0f4" stroke="#1b8a90"/>
<path d="M1278 399h4v360h-4z" fill="#2fa9ad"/>
<path d="M1404 399v338M1408 737h-85q-15 0-15 15v7" fill="none" stroke="#117a80"/>
<!-- core pin -->
<path d="M1033 817l157-8v127l-128-8-16-38z" fill="url(#yel)"/>
<path d="M1033 817l157-7M1033 821l157-8M1033 830l157-5M1041 858l149-2M1047 890l143-2M1055 921l135 6M1062 928l128 7" fill="none" stroke="#4c4a10"/>
<path d="M1189 759h208v179h-208z" fill="#6f37d8" stroke="#3a2088"/>
<path d="M1189 782h208" stroke="#2c1a60"/>
<!-- moulded part -->
<g transform="translate(250 760) scale(.33333)" stroke-width="3">
<path d="M150 483q0 40 20 44h62l8 30h10v20h68v-20h12l8-29h187v10h305v-11h110q18 0 20-14z" fill="#2fc832" stroke="#1b5c1b"/>
<path d="M250 490h68v87h-68z" fill="#3ceb3c"/><path d="M250 575h68" stroke="#111" stroke-width="5"/>
<path d="M245 530l14-28v30l-10 8zM320 530l-14-28v30l10 8z" fill="#a83a8c"/>
<path d="M452 530l18-20 18 20z" fill="#7f7"/><path d="M525 532h305" stroke="#164" stroke-width="8"/>
<path d="M78 478L92 230q3-30 43-35h23l8 90q3 60 16 85 10 20 22 25h711q25-10 33-45 17-70 19-142h43q-2-13 20-21 35-12 50-52l35 20q85 35 175 50 110 13 190 12 120-7 220-35 100-32 180-80l35 4 165 10 120 4 80-1q50 3 65 51l5 30 20 100 30 140q15 50 35 63l3 55-43 4-5 14h-18l-7-16-865-30-540-17-810-35z" fill="url(#grn)" stroke="#1a6b1a"/>
<path d="M92 232h66v124q-42 0-66 28zM92 326h66" fill="#24c22a" fill-opacity=".6" stroke="#164f16"/>
<path d="M92 384V326M140 197v282M92 432q20-18 60-15l350 23 455 21 300 14h164M92 435l410 6M83 478l880 34 475 15 925 32" fill="none" stroke="#164f16"/>
<path d="M963 512l475 15 925 32" fill="none" stroke="#0d420f" stroke-width="5"/>
<path d="M160 240q4 90 22 128M165 300v60M959 300v212M967 268q120 0 280 58M950 355q130 0 305 32M930 388q160 0 325 28M1010 208q240 10 295 66M1040 187h30l150 22M1115 155l-22 6-15 26 35 22M1210 188q25 50 95 88M1255 260v215M1380 217q20 15 55 19M1440 219l-18 95v210" fill="none" stroke="#164f16"/>
<path d="M1305 276q-35 5-50 0M1318 297q100 27 300 30 200 20 740 28h10l8 8" fill="none" stroke="#0e4a12" stroke-width="4"/>
<path d="M1275 285q10-14 35-8 20 30-5 65-15 20-32 20" fill="#25b52b" stroke="#164f16"/>
<ellipse cx="1030" cy="202" rx="20" ry="8" fill="#37dd37" stroke="#164f16"/>
<path d="M1640 204q200 22 420 24h210M1690 198q180 15 510 17M1763 165l-10 41M1870 108l-8 98M1880 104l-6 106M1914 104v10l230 8h60M2176 122l12 95q8 60 40 60l70 6q50 2 70 60M2176 122h30M2230 120v97M2278 120v50M2280 130q50 0 60 60M2282 120q40 20 63 48M2307 254l18 110 18 190M2345 170l-15 30 10 20M2350 200l22 120 20 230M2400 440q5 70 36 105" fill="none" stroke="#164f16"/>
<path d="M2380 350l12 205h45l-2-52q-20-13-35-63z" fill="#2ecb35" stroke="#164f16"/>
<ellipse cx="2298" cy="211" rx="29" ry="43" fill="#3df03f" stroke="#164f16"/>
<path d="M1262 475l6-195 10 10-3 180z" fill="#8796e8"/>
<path d="M1265 475l150-12 50 8-50 8z" fill="#c4dcc0"/><circle cx="1266" cy="472" r="7" fill="none" stroke="#d33"/>
</g>
<text x="678" y="851" class="axis zc">ZC</text><text x="673" y="918" class="axis xc">XC</text><text x="723" y="912" class="axis yc">YC</text>
<!-- view triad -->
<path d="M115 1046h31v30h-31z" fill="#cfcfcf" stroke="#aaa"/>
<path d="M116 1076v-42" stroke="#2238d8" stroke-width="3"/><path d="M112 1038l4-12 4 12z" fill="#2238d8"/>
<path d="M116 1076h36" stroke="#286c2c" stroke-width="2"/><path d="M150 1072l16 4-16 4z" fill="#286c2c"/>
<circle cx="116" cy="1076" r="4" fill="#b02020"/>
<text x="112" y="1026" class="tri zc2">Z</text><text x="167" y="1080" class="tri yc2">Y</text>
<!-- tracking lines and pointer -->
<path d="M45 1021h1502M1623 1021h621M1586 258v725M1586 1057v23" stroke="#000" stroke-width="2"/>
<circle cx="1562" cy="1010" r="13" fill="none" stroke="#333" stroke-dasharray="13 7.400" stroke-dashoffset="-4"/>
<path d="M1560 992h3v36h-3z" fill="#999" stroke="#000"/><path d="M1544 1009h36v2h-36z" fill="#fff" stroke="#000"/>
<!-- zoom gauge -->
<path d="M2237 891v50" stroke="#55626e" stroke-width="7" stroke-linecap="round"/>
<circle cx="2237" cy="946" r="7" fill="#3cb4e0" stroke="#48606e"/><path d="M2237 914v32" stroke="#3c9cd0" stroke-width="3"/>
</svg>
<p class="mark">@格子老师</p>
</section>
</main>
</body>
</html>
```

FILE: styles.css
```css
* { box-sizing: border-box; }
html, body { height: 100%; }
body {
  margin: 0;
  display: flex;
  flex-direction: column;
  overflow: hidden;
  background: #fefefe;
  color: #222;
  font: 13px/18px "Noto Sans", "Noto Sans CJK SC", sans-serif;
}
button, input, select {
  margin: 0;
  padding: 0;
  border: 0;
  background: none;
  color: inherit;
  font: inherit;
}
svg { display: block; }
.sprite { position: absolute; width: 0; height: 0; }

/* drawing strokes shared by the icons */
.k { fill: none; stroke: #444; }
.r { fill: none; stroke: #d23a34; }
.b { fill: none; stroke: #4450b4; }
.w { stroke-width: 2; }
.d { stroke-dasharray: 2 1; }
.s3 { fill: none; stroke: #b4b4b4; stroke-width: 2; }
.lg { fill: #f2f2f2; stroke: #b8b8b8; }
.lg0 { fill: none; stroke: #b0b0b0; }
.gk { fill: #dcdcdc; stroke: #666; }
.rf { fill: #c4282c; }
.gf { fill: #2ca04a; }
.san { font: bold 20px "Liberation Sans", sans-serif; fill: #333; }
.ax { font: bold 9px "Liberation Sans", sans-serif; fill: #333; }

.titlebar {
  display: flex;
  align-items: center;
  height: 30px;
  padding: 0 8px 0 4px;
}
.nx {
  width: 44px;
  border-right: 1px solid #e2e2e2;
  color: #8397a6;
  font: bold 24px/26px "Open Sans", sans-serif;
}
.title {
  flex: 1;
  margin: 0 0 0 6px;
  color: #000;
  font-size: 15px;
  font-weight: normal;
}
.brand {
  margin-right: 28px;
  color: #099;
  font: 800 16px/20px "Open Sans", sans-serif;
}
.winctl { display: flex; gap: 12px; color: #555; }
.winctl button { width: 16px; height: 16px; }
.winctl svg { width: 16px; height: 16px; }
.winctl.dark { gap: 5px; margin-left: auto; color: #111; }

.menubar {
  display: flex;
  align-items: center;
  height: 32px;
  padding: 0 7px 3px 0;
  background: #c8d8d7;
}
.menubar > button { margin-right: 17px; white-space: nowrap; }
.menubar > .wide { margin-right: 19px; }
.particon { width: 18px; height: 18px; margin-right: 8px; }

.row { display: flex; gap: 1px; height: 40px; padding-left: 1px; }
.row.first { gap: 0; height: 39px; padding-left: 0; }
.bar {
  display: flex;
  align-items: center;
  border-right: 1px solid #d9d9d9;
  border-bottom: 1px solid #d9d9d9;
}
.bar.grow { flex: 1; }
.grip {
  flex: none;
  width: 3px;
  height: 32px;
  margin: 0 3px 0 4px;
  border-left: 3px dotted #bdbdbd;
}
.menubar .grip { height: 22px; margin-right: 2px; border-color: #a9b9b8; }
.sep {
  flex: none;
  width: 1px;
  height: 29px;
  margin: 0 3px;
  background: #d6d6d6;
}
.tool {
  flex: none;
  display: grid;
  place-items: center;
  width: 36px;
  height: 32px;
}
.tool svg { width: 26px; height: 26px; }
.glyph { color: #333; line-height: 28px; }
.serif { font: bold 30px/28px "Liberation Serif", serif; }
.mould {
  width: 27px;
  height: 27px;
  border: 2px solid #aaa;
  background: #c03a30;
  color: #ffe838;
  font: bold 24px/23px "Liberation Sans", sans-serif;
}
.label { width: 27px; white-space: nowrap; }
.drop, .more {
  flex: none;
  display: flex;
  justify-content: center;
  width: 14px;
}
.drop::after, .more::after, .combo::after {
  content: "";
  border: 3px solid transparent;
  border-top: 4px solid #111;
  border-bottom: 0;
}
.more { width: 16px; align-self: flex-end; padding-bottom: 9px; }
.more.gap { width: 19px; }
.more.wide {
  flex-direction: column;
  align-items: center;
  gap: 4px;
  width: 20px;
  font-size: 16px;
  font-weight: bold;
  line-height: 14px;
}
.more.end { margin-left: auto; }

.search {
  display: flex;
  align-items: center;
  width: 146px;
  height: 24px;
  margin: 0 5px 0 6px;
  border: 1px solid #a6a6a6;
  background: #fff;
}
.search input { flex: 1; min-width: 0; padding-left: 2px; outline: 0; }
.search svg { width: 18px; height: 18px; margin-right: 2px; }

.combo {
  display: flex;
  align-items: center;
  height: 22px;
  padding-right: 7px;
  border: 1px solid #a0a0a0;
  background: #fff;
}
.combo select { flex: 1; min-width: 0; padding-left: 2px; appearance: none; outline: 0; }
.combo::after { border-width: 5px 4px 0; }
.layerbox { width: 57px; height: 24px; margin: 0 5px 0 4px; }
.filter { width: 155px; margin-right: 8px; }
.scope { width: 164px; margin-right: 2px; }

.selbar {
  flex: none;
  display: flex;
  align-items: center;
  height: 37px;
  padding-left: 6px;
  border-bottom: 1px solid #8e8e8e;
}
.mini {
  flex: none;
  display: grid;
  place-items: center;
  width: 27px;
  height: 25px;
}
.mini svg { width: 21px; height: 21px; }
.mini.on { background: #c6d8d5; border: 1px solid #b3c8c5; }
.selbar .drop { width: 12px; }
.selbar .more { padding-bottom: 9px; }

.work { flex: 1; display: flex; min-height: 0; }
.side {
  flex: none;
  display: flex;
  flex-direction: column;
  gap: 13px;
  width: 45px;
  border-right: 7px solid #fff;
  background: #dcdcdc;
}
.side button {
  display: grid;
  place-items: center;
  width: 38px;
  height: 49px;
  padding-left: 5px;
  border-right: 1px solid #a9a9a9;
}
.side svg { width: 26px; height: 26px; }
.side .cfg { height: 30px; padding: 0 3px 0 0; margin-bottom: 6px; }
.side .cfg svg { width: 22px; height: 22px; }
.side .active {
  width: 35px;
  height: 52px;
  margin-left: 3px;
  padding: 0 0 0 2px;
  border: 1px solid #b5b5b5;
  border-right: 0;
  background: #fff;
}
.view {
  position: relative;
  flex: 1;
  min-width: 0;
  background: #d3d4d6;
}
.scene { width: 100%; height: 100%; }
.axis { font: 16px "Open Sans", sans-serif; }
.zc { fill: #1c9cd8; }
.xc { fill: #c86428; }
.yc { fill: #2e8a2e; }
.tri { font: bold 12px "Open Sans", sans-serif; }
.zc2 { fill: #5058d0; }
.yc2 { fill: #4a8a50; }
.mark {
  position: absolute;
  right: 36px;
  bottom: 16px;
  margin: 0;
  color: #008080;
  font: 52px/64px "Noto Sans CJK SC", sans-serif;
  text-shadow: 1px 0 0 #013;
}
```
